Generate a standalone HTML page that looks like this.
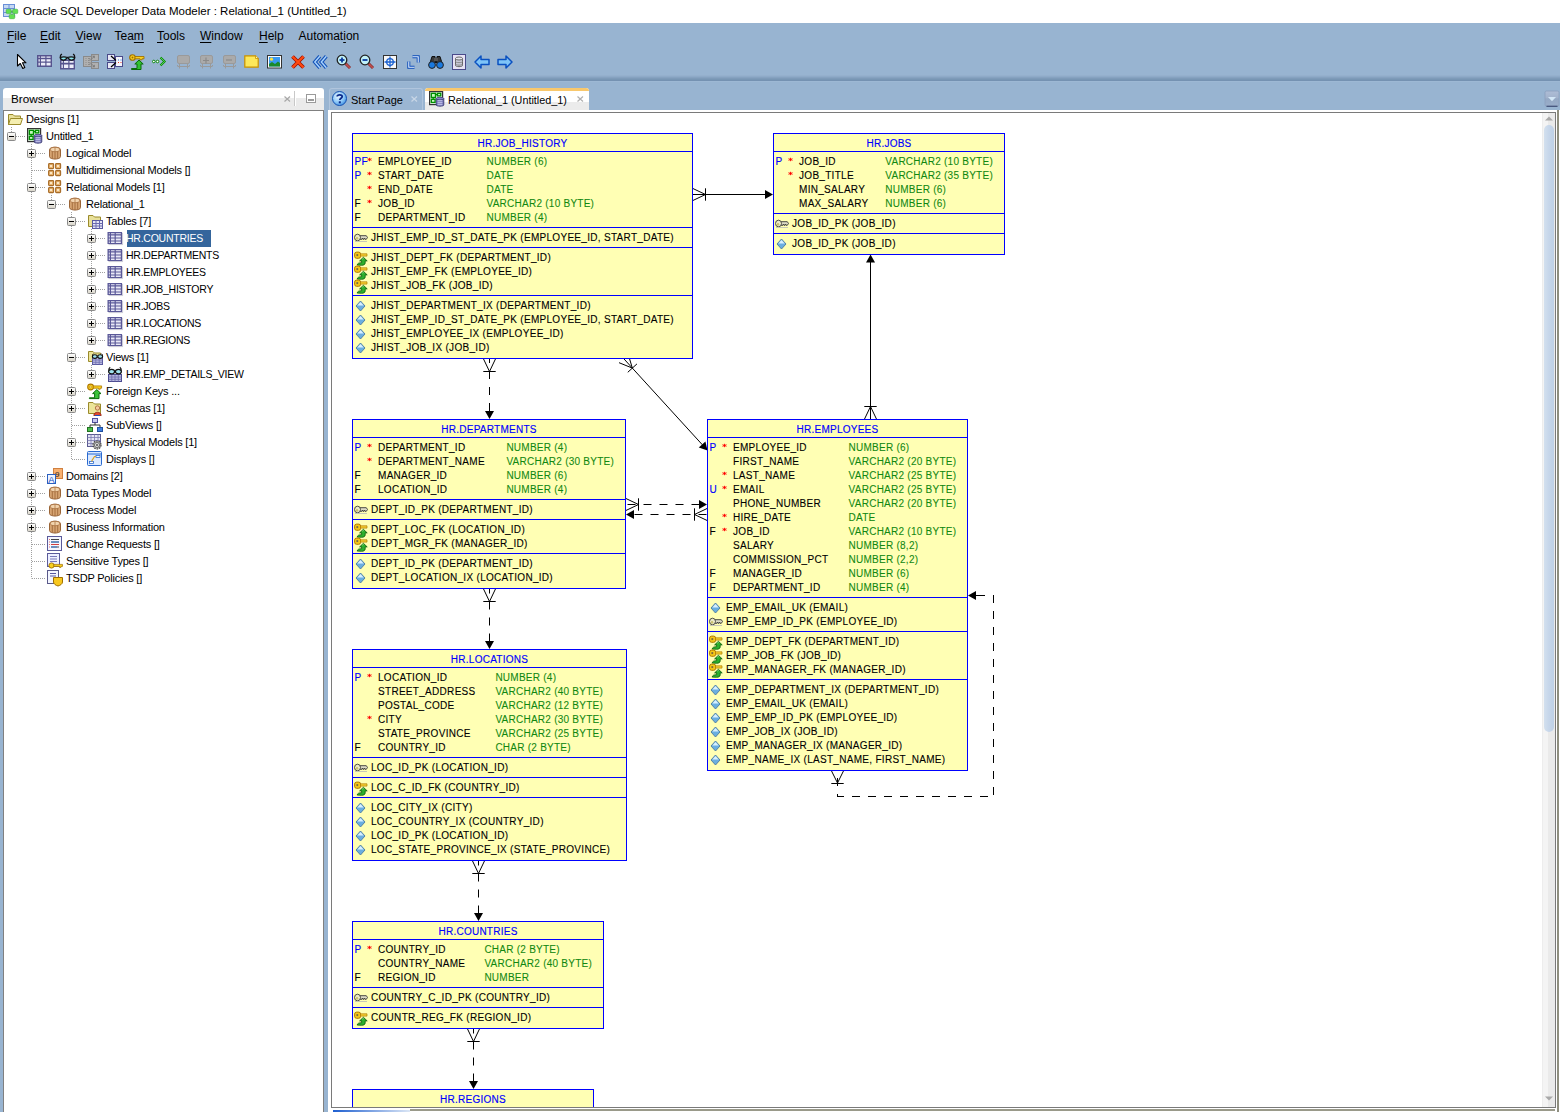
<!DOCTYPE html><html><head><meta charset="utf-8"><style>
html,body{margin:0;padding:0;}
body{width:1560px;height:1112px;overflow:hidden;position:relative;background:#98b4d1;font-family:"Liberation Sans",sans-serif;}
.t{position:absolute;white-space:pre;font-family:"Liberation Sans",sans-serif;}
svg{position:absolute;overflow:visible;}
u{text-decoration:underline;text-underline-offset:2px;text-decoration-thickness:1px;}
</style></head><body>
<div style="position:absolute;left:0px;top:0px;width:1560px;height:23px;background:#fff"></div>
<svg style="left:0;top:0" width="22" height="22" viewBox="0 0 22 22">
<rect x="3.5" y="4.5" width="11" height="12" fill="#c6d8f2" stroke="#6a90d8"/>
<path d="M3.5 8.5H14.5M3.5 12.5H14.5M9 4.5V8.5" stroke="#6a90d8"/>
<rect x="6.2" y="9.2" width="5" height="4.4" rx="1.2" fill="#62e052" stroke="#44b040" stroke-width="0.6"/>
<rect x="12.6" y="9.2" width="5.2" height="4.4" rx="1.2" fill="#62e052" stroke="#44b040" stroke-width="0.6"/>
<rect x="9.2" y="14.4" width="5.6" height="4.3" rx="1.2" fill="#62e052" stroke="#44b040" stroke-width="0.6"/>
<path d="M11.2 11.4H12.6M12 13.6V14.4" stroke="#44a040"/>
</svg>
<div class="t" style="left:23px;top:6.27px;font-size:11.5px;line-height:11.5px;color:#000;letter-spacing:0px;">Oracle SQL Developer Data Modeler : Relational_1 (Untitled_1)</div>
<div class="t" style="left:7px;top:29.84px;font-size:12px;line-height:12px;color:#000;letter-spacing:0px;"><u>F</u>ile</div>
<div class="t" style="left:40px;top:29.84px;font-size:12px;line-height:12px;color:#000;letter-spacing:0px;"><u>E</u>dit</div>
<div class="t" style="left:75.5px;top:29.84px;font-size:12px;line-height:12px;color:#000;letter-spacing:0px;"><u>V</u>iew</div>
<div class="t" style="left:114.5px;top:29.84px;font-size:12px;line-height:12px;color:#000;letter-spacing:0px;">Tea<u>m</u></div>
<div class="t" style="left:157px;top:29.84px;font-size:12px;line-height:12px;color:#000;letter-spacing:0px;"><u>T</u>ools</div>
<div class="t" style="left:200px;top:29.84px;font-size:12px;line-height:12px;color:#000;letter-spacing:0px;"><u>W</u>indow</div>
<div class="t" style="left:259px;top:29.84px;font-size:12px;line-height:12px;color:#000;letter-spacing:0px;"><u>H</u>elp</div>
<div class="t" style="left:298.5px;top:29.84px;font-size:12px;line-height:12px;color:#000;letter-spacing:0px;">Automat<u>i</u>on</div>
<div style="position:absolute;left:0px;top:75px;width:1560px;height:1px;background:#95b0cd"></div>
<div style="position:absolute;left:0px;top:76px;width:1560px;height:1px;background:#8eaac8"></div>
<div style="position:absolute;left:0px;top:77px;width:1560px;height:1px;background:#86a2c0"></div>
<div style="position:absolute;left:0px;top:78px;width:1560px;height:1px;background:#7e9bb9"></div>
<div style="position:absolute;left:0px;top:79px;width:1560px;height:1px;background:#7896b4"></div>
<div style="position:absolute;left:0px;top:80px;width:1560px;height:1px;background:#7592b2"></div>
<div style="position:absolute;left:0px;top:81px;width:1560px;height:1px;background:#9db8d4"></div>
<svg style="left:16px;top:53px" width="11" height="17" viewBox="0 0 11 17"><path d="M1.5 1.5V13L4.3 10.5L6.8 15.5L8.8 14.5L6.5 9.8H10Z" fill="#fff" stroke="#000" stroke-width="1.1" stroke-linejoin="round"/></svg><svg style="left:36px;top:54px" width="17" height="14" viewBox="0 0 17 14"><rect x="1" y="1" width="15" height="12" fill="#56548e"/><path d="M2.5 2.5H3.8V3.8H2.5ZM5 2.5H9.3V3.8H5ZM10.5 2.5H14.6V3.8H10.5ZM2.5 5.2H3.8V7.4H2.5ZM5 5.2H9.3V7.4H5ZM10.5 5.2H14.6V7.4H10.5ZM2.5 8.8H3.8V11.5H2.5ZM5 8.8H9.3V11.5H5ZM10.5 8.8H14.6V11.5H10.5Z" fill="#eeeefa"/></svg><svg style="left:59px;top:53px" width="17" height="17" viewBox="0 0 17 17"><rect x="1" y="6.5" width="15" height="10" fill="#56548e"/><path d="M2.5 8H3.8V9.8H2.5ZM5 8H9.3V9.8H5ZM10.5 8H14.6V9.8H10.5ZM2.5 11.5H3.8V15H2.5ZM5 11.5H9.3V15H5ZM10.5 11.5H14.6V15H10.5Z" fill="#eeeefa"/><path d="M1.3 4.5C1.3 7.5 6.5 8 7.6 5.2L8.5 4.5L9.4 5.2C10.5 8 15.7 7.5 15.7 4.5C13 3.5 10.5 3.8 8.5 4.5C6.5 3.8 4 3.5 1.3 4.5Z" fill="#8ee8f0" stroke="#111" stroke-width="1.3"/><path d="M1.5 4.5C1.2 3 1.8 1.5 3 1M15.5 4.5C15.8 3 15.2 1.5 14 1" fill="none" stroke="#111" stroke-width="1.3"/></svg><svg style="left:83px;top:54px" width="16" height="15" viewBox="0 0 16 15"><rect x="0.5" y="2.5" width="8" height="10" fill="#b0b0b0" stroke="#8a8a8a"/><rect x="8.5" y="0.5" width="7" height="6" fill="#b0b0b0" stroke="#8a8a8a"/><rect x="8.5" y="8.5" width="7" height="6" fill="#b0b0b0" stroke="#8a8a8a"/><path d="M2.5 4.5H3.5M5 4.5H7M2.5 6.5H3.5M5 6.5H6M2.5 8.5H3.5M5 8.5H6M2.5 10.5H3.5M5 10.5H7" stroke="#8c8c8c"/><path d="M6.5 6.5L11 2.5M6.5 8.5L11 12.5" stroke="#7a7a7a" stroke-width="1.1" stroke-dasharray="1 0.5"/><path d="M9 1.8H11.8V4.6ZM9 13.2H11.8V10.4Z" fill="#7a7a7a"/></svg><svg style="left:107px;top:54px" width="16" height="15" viewBox="0 0 16 15"><rect x="0.5" y="0.5" width="7" height="6" fill="#e8e8f4" stroke="#4a4a8a"/><rect x="0.5" y="8.5" width="7" height="6" fill="#e8e8f4" stroke="#4a4a8a"/><rect x="8.5" y="2.5" width="7" height="10" fill="#f4f4fa" stroke="#4a4a8a"/><path d="M4 2L9 6.5M4 13L9 8.5" stroke="#000" stroke-width="1.2"/><path d="M11 6H12M13.5 6H14.5" stroke="#2a7ae0"/><path d="M11 8.5H12M13.5 8.5H14.5" stroke="#e03a2a"/></svg><svg style="left:129px;top:54px" width="16" height="16" viewBox="0 0 16 16"><circle cx="3.5" cy="3.5" r="2.8" fill="#f8d020" stroke="#a07000" stroke-width="1.1"/><circle cx="3.5" cy="3.5" r="1" fill="#a07000"/><path d="M6 2.5H15V4.8H13V5.8H11V4.8H6Z" fill="#f8d020" stroke="#a07000" stroke-width="0.9"/><path d="M2.5 14.5H8V10H5.8L10 6L14.2 10H12V15.5H2.5Z" fill="#30c030" stroke="#0a6a0a" stroke-width="1"/></svg><svg style="left:152px;top:56px" width="15" height="11" viewBox="0 0 15 11"><circle cx="1.8" cy="5.5" r="1.3" fill="#fff" stroke="#0a8a0a"/><circle cx="5.5" cy="5.5" r="1.3" fill="#fff" stroke="#0a8a0a"/><path d="M8.5 1.5L12.5 5.5L8.5 9.5" fill="none" stroke="#0a8a0a" stroke-width="2.2"/><path d="M8.5 1.5L12.5 5.5L8.5 9.5" fill="none" stroke="#6ae06a" stroke-width="0.8"/></svg><svg style="left:177px;top:55px" width="13" height="14" viewBox="0 0 13 14"><rect x="0.5" y="0.5" width="12" height="8" rx="1.5" fill="#aaaaaa" stroke="#9a9a9a"/><path d="M2.5 8.5V13.5M10.5 8.5V13.5M0.5 11.5H12.5M0 10L1.5 11.5M13 10L11.5 11.5" stroke="#9a9a9a"/></svg><svg style="left:200px;top:55px" width="13" height="14" viewBox="0 0 13 14"><rect x="0.5" y="0.5" width="12" height="8" rx="1.5" fill="#aaaaaa" stroke="#9a9a9a"/><path d="M6 2.5V8.5M3 5.5H9" stroke="#8a8a8a" stroke-width="1.2"/><path d="M2.5 8.5V13.5M10.5 8.5V13.5M0.5 11.5H12.5M0 10L1.5 11.5M13 10L11.5 11.5" stroke="#9a9a9a"/></svg><svg style="left:223px;top:55px" width="13" height="14" viewBox="0 0 13 14"><rect x="0.5" y="0.5" width="12" height="8" rx="1.5" fill="#aaaaaa" stroke="#9a9a9a"/><path d="M3 5H9" stroke="#8a8a8a" stroke-width="1.2"/><path d="M2.5 8.5V13.5M10.5 8.5V13.5M0.5 11.5H12.5M0 10L1.5 11.5M13 10L11.5 11.5" stroke="#9a9a9a"/></svg><svg style="left:244px;top:55px" width="15" height="13" viewBox="0 0 15 13"><path d="M0.8 0.8H11.5L14.2 3.5V12.2H0.8Z" fill="#fde85a" stroke="#c89000" stroke-width="1.2"/><path d="M11.5 0.8V3.5H14.2" fill="#fff6b0" stroke="#c89000" stroke-width="0.8"/></svg><svg style="left:267px;top:55px" width="15" height="14" viewBox="0 0 15 14"><rect x="0.5" y="0.5" width="14" height="12.5" fill="#fff" stroke="#333"/><rect x="2" y="2" width="11" height="9.5" fill="#3a9af0"/><circle cx="4.5" cy="4.2" r="1.6" fill="#f8e040"/><path d="M2 11.5V9L5 7L8 9L11 6.5L13 8V11.5Z" fill="#1a8a2a"/></svg><svg style="left:291px;top:55px" width="14" height="14" viewBox="0 0 14 14"><path d="M1.5 1.5L12.5 12.5M12.5 1.5L1.5 12.5" stroke="#a01000" stroke-width="3.8"/><path d="M1.5 1.5L12.5 12.5M12.5 1.5L1.5 12.5" stroke="#ff4a10" stroke-width="2.2"/></svg><svg style="left:313px;top:55px" width="16" height="14" viewBox="0 0 16 14"><path d="M6.8 1.2L1.8 7L6.8 12.8M13.3 1.2L8.3 7L13.3 12.8" fill="none" stroke="#1452b8" stroke-width="3.6" stroke-linejoin="miter"/><path d="M6.8 1.2L1.8 7L6.8 12.8M13.3 1.2L8.3 7L13.3 12.8" fill="none" stroke="#a8d4ff" stroke-width="1.4"/></svg><svg style="left:336px;top:54px" width="16" height="16" viewBox="0 0 16 16"><path d="M9.5 9.5L14 14" stroke="#8a3030" stroke-width="3"/><path d="M9.5 9.5L14 14" stroke="#c05050" stroke-width="1.5"/><circle cx="6" cy="6" r="4.8" fill="#c0f0f8" stroke="#222" stroke-width="1.3"/><path d="M3.5 6H8.5" stroke="#0a3aa0" stroke-width="1.8"/><path d="M6 3.5V8.5" stroke="#0a3aa0" stroke-width="1.8"/></svg><svg style="left:359px;top:54px" width="16" height="16" viewBox="0 0 16 16"><path d="M9.5 9.5L14 14" stroke="#8a3030" stroke-width="3"/><path d="M9.5 9.5L14 14" stroke="#c05050" stroke-width="1.5"/><circle cx="6" cy="6" r="4.8" fill="#c0f0f8" stroke="#222" stroke-width="1.3"/><path d="M3.5 6H8.5" stroke="#0a3aa0" stroke-width="1.8"/></svg><svg style="left:383px;top:55px" width="14" height="14" viewBox="0 0 14 14"><rect x="0.5" y="0.5" width="13" height="13" fill="#f8f8f8" stroke="#333"/><circle cx="7" cy="7" r="3.3" fill="none" stroke="#1a60d0" stroke-width="1.3"/><path d="M7 1.5V12.5M1.5 7H12.5" stroke="#1a60d0" stroke-width="1.3"/></svg><svg style="left:407px;top:55px" width="13" height="14" viewBox="0 0 13 14"><path d="M5.5 1.8H11.2V7.5M1.8 6.5V12.2H7.5" fill="none" stroke="#0a4ab8" stroke-width="3"/><path d="M5.5 1.8H11.2V7.5M1.8 6.5V12.2H7.5" fill="none" stroke="#e8f4ff" stroke-width="1.1"/></svg><svg style="left:428px;top:55px" width="16" height="14" viewBox="0 0 16 14"><path d="M2 8L4 1.5H7L7.5 8ZM14 8L12 1.5H9L8.5 8Z" fill="#3a3a3a" stroke="#111"/><rect x="6" y="3" width="4" height="3" fill="#555"/><circle cx="4" cy="10" r="3.4" fill="#1a7ae0" stroke="#222"/><circle cx="12" cy="10" r="3.4" fill="#1a7ae0" stroke="#222"/></svg><svg style="left:452px;top:54px" width="14" height="16" viewBox="0 0 14 16"><rect x="0.5" y="0.5" width="13" height="15" fill="#e6e2f4" stroke="#4a4a8a"/><path d="M3.5 4.5V11.5C3.5 13 10.5 13 10.5 11.5V4.5" fill="#c8c8d8" stroke="#666"/><ellipse cx="7" cy="4.5" rx="3.5" ry="1.5" fill="#e8e8f0" stroke="#666"/><path d="M3.5 7.5C3.5 9 10.5 9 10.5 7.5M3.5 10C3.5 11.5 10.5 11.5 10.5 10" fill="none" stroke="#888"/></svg><svg style="left:474px;top:55px" width="16" height="14" viewBox="0 0 16 14"><path d="M1 7L7 1V4.5H15V9.5H7V13Z" fill="#7ec4f8" stroke="#0a50c0" stroke-width="1.5" stroke-linejoin="round"/></svg><svg style="left:497px;top:55px" width="16" height="14" viewBox="0 0 16 14"><path d="M15 7L9 1V4.5H1V9.5H9V13Z" fill="#7ec4f8" stroke="#0a50c0" stroke-width="1.5" stroke-linejoin="round"/></svg>
<div style="position:absolute;left:3px;top:88px;width:321px;height:1030px;background:#fff;border-radius:3px 3px 0 0"></div>
<div style="position:absolute;left:3px;top:98px;width:321px;height:12px;background:#ebebeb"></div>
<div class="t" style="left:11px;top:93.10px;font-size:11.7px;line-height:11.7px;color:#000;letter-spacing:0px;">Browser</div>
<svg style="left:284px;top:96px" width="7" height="6"><path d="M0.5 0.5L6 5.5M6 0.5L0.5 5.5" stroke="#a8a8a8" stroke-width="1.2"/></svg>
<div style="position:absolute;left:294px;top:91px;width:1px;height:15px;background:#c8c8c8"></div>
<div style="position:absolute;left:295px;top:91px;width:1px;height:15px;background:#fff"></div>
<div style="position:absolute;left:306px;top:94px;width:10px;height:9px;background:#fff;border:1px solid #9a9a9a;box-sizing:border-box"></div>
<div style="position:absolute;left:308px;top:99px;width:6px;height:2px;background:#9a9a9a"></div>
<div style="position:absolute;left:3px;top:110px;width:321px;height:1010px;background:#fff;border-top:1px solid #808080;border-left:1px solid #808080;border-right:1px solid #808080;box-sizing:border-box"></div>
<svg style="left:0;top:0" width="330" height="600"><path d="M11.5 127V136.5" stroke="#a0a0a0" stroke-dasharray="1 1"/><path d="M31.5 144V578.5" stroke="#a0a0a0" stroke-dasharray="1 1"/><path d="M51.5 195V204.5" stroke="#a0a0a0" stroke-dasharray="1 1"/><path d="M71.5 212V459.5" stroke="#a0a0a0" stroke-dasharray="1 1"/><path d="M91.5 229V340.5" stroke="#a0a0a0" stroke-dasharray="1 1"/><path d="M91.5 365V374.5" stroke="#a0a0a0" stroke-dasharray="1 1"/><path d="M12 136.5H25" stroke="#a0a0a0" stroke-dasharray="1 1"/><path d="M32 153.5H45" stroke="#a0a0a0" stroke-dasharray="1 1"/><path d="M32 170.5H45" stroke="#a0a0a0" stroke-dasharray="1 1"/><path d="M32 187.5H45" stroke="#a0a0a0" stroke-dasharray="1 1"/><path d="M52 204.5H65" stroke="#a0a0a0" stroke-dasharray="1 1"/><path d="M72 221.5H85" stroke="#a0a0a0" stroke-dasharray="1 1"/><path d="M92 238.5H105" stroke="#a0a0a0" stroke-dasharray="1 1"/><path d="M92 255.5H105" stroke="#a0a0a0" stroke-dasharray="1 1"/><path d="M92 272.5H105" stroke="#a0a0a0" stroke-dasharray="1 1"/><path d="M92 289.5H105" stroke="#a0a0a0" stroke-dasharray="1 1"/><path d="M92 306.5H105" stroke="#a0a0a0" stroke-dasharray="1 1"/><path d="M92 323.5H105" stroke="#a0a0a0" stroke-dasharray="1 1"/><path d="M92 340.5H105" stroke="#a0a0a0" stroke-dasharray="1 1"/><path d="M72 357.5H85" stroke="#a0a0a0" stroke-dasharray="1 1"/><path d="M92 374.5H105" stroke="#a0a0a0" stroke-dasharray="1 1"/><path d="M72 391.5H85" stroke="#a0a0a0" stroke-dasharray="1 1"/><path d="M72 408.5H85" stroke="#a0a0a0" stroke-dasharray="1 1"/><path d="M72 425.5H85" stroke="#a0a0a0" stroke-dasharray="1 1"/><path d="M72 442.5H85" stroke="#a0a0a0" stroke-dasharray="1 1"/><path d="M72 459.5H85" stroke="#a0a0a0" stroke-dasharray="1 1"/><path d="M32 476.5H45" stroke="#a0a0a0" stroke-dasharray="1 1"/><path d="M32 493.5H45" stroke="#a0a0a0" stroke-dasharray="1 1"/><path d="M32 510.5H45" stroke="#a0a0a0" stroke-dasharray="1 1"/><path d="M32 527.5H45" stroke="#a0a0a0" stroke-dasharray="1 1"/><path d="M32 544.5H45" stroke="#a0a0a0" stroke-dasharray="1 1"/><path d="M32 561.5H45" stroke="#a0a0a0" stroke-dasharray="1 1"/><path d="M32 578.5H45" stroke="#a0a0a0" stroke-dasharray="1 1"/></svg>
<svg style="left:7px;top:111px" width="17" height="17" viewBox="0 0 17 17"><path d="M1.5 3.5H6L7.5 5H13.5V13.5H1.5Z" fill="#e8e09a" stroke="#9a8a2a"/><path d="M1.5 13.5L3.5 7.5H15.5L13.5 13.5Z" fill="#f4eeb0" stroke="#9a8a2a"/></svg>
<div class="t" style="left:26px;top:113.69px;font-size:11px;line-height:11px;color:#000;letter-spacing:-0.2px;">Designs [1]</div>
<svg style="left:27px;top:128px" width="17" height="17" viewBox="0 0 17 17"><rect x="0.6" y="0.6" width="13" height="13" fill="#fff" stroke="#333" stroke-width="1.2"/><rect x="2.3" y="2.3" width="4.2" height="4.2" fill="#c8f8c0" stroke="#009000" stroke-width="1.4"/><rect x="8.4" y="2.3" width="3.4" height="2.6" fill="#c8f8c0" stroke="#009000" stroke-width="1.4"/><rect x="2.3" y="8.3" width="3.8" height="3.2" fill="#c8f8c0" stroke="#009000" stroke-width="1.4"/><path d="M6.5 3.6H8.4M4.2 6.5V8.3" stroke="#009000" stroke-width="1.2"/><path d="M7.2 7.6V14C7.2 15.6 14.8 15.6 14.8 14V7.6Z" fill="#6a6ab0"/><ellipse cx="11" cy="7.6" rx="3.8" ry="1.3" fill="#8a8ac8" stroke="#3a3a70" stroke-width="0.8"/><path d="M8.5 9.8H13.5M8.5 11.8H13.5M8.5 13.8H13.5" stroke="#e8e8ff" stroke-width="0.9"/><path d="M7.2 7.6V14C7.2 15.6 14.8 15.6 14.8 14V7.6" fill="none" stroke="#3a3a70" stroke-width="0.8"/></svg>
<svg style="left:7px;top:132px" width="9" height="9" viewBox="0 0 9 9"><defs><linearGradient id="eg1" x1="0" y1="0" x2="0" y2="1"><stop offset="0" stop-color="#fff"/><stop offset="1" stop-color="#d8d4c8"/></linearGradient></defs><rect x="0.5" y="0.5" width="8" height="8" rx="1" fill="url(#eg1)" stroke="#8a8a8a"/><path d="M2 4.5H7" stroke="#000"/></svg>
<div class="t" style="left:46px;top:130.69px;font-size:11px;line-height:11px;color:#000;letter-spacing:-0.2px;">Untitled_1</div>
<svg style="left:47px;top:145px" width="17" height="17" viewBox="0 0 17 17"><path d="M2.5 4.6C2.5 1.4 13.5 1.4 13.5 4.6V11.6C13.5 14.8 2.5 14.8 2.5 11.6Z" fill="#d6a472" stroke="#9a6436" stroke-width="1"/><ellipse cx="8" cy="4.5" rx="4.6" ry="2.2" fill="#f2d4ae" stroke="#a87040" stroke-width="0.8"/><path d="M5.3 6.5V13.4M8 6.8V14.2M10.7 6.5V13.4" stroke="#a06a3a" stroke-width="0.9"/><path d="M8 2.4V6.8" stroke="#b07a48" stroke-width="0.8"/></svg>
<svg style="left:27px;top:149px" width="9" height="9" viewBox="0 0 9 9"><defs><linearGradient id="eg2" x1="0" y1="0" x2="0" y2="1"><stop offset="0" stop-color="#fff"/><stop offset="1" stop-color="#d8d4c8"/></linearGradient></defs><rect x="0.5" y="0.5" width="8" height="8" rx="1" fill="url(#eg2)" stroke="#8a8a8a"/><path d="M2 4.5H7" stroke="#000"/><path d="M4.5 2V7" stroke="#000"/></svg>
<div class="t" style="left:66px;top:147.69px;font-size:11px;line-height:11px;color:#000;letter-spacing:-0.2px;">Logical Model</div>
<svg style="left:47px;top:162px" width="17" height="17" viewBox="0 0 17 17"><rect x="1.6" y="1.6" width="5" height="5" rx="0.8" fill="#e8b470" stroke="#a86c28" stroke-width="1.1"/><rect x="8.6" y="1.6" width="5" height="5" rx="0.8" fill="#e8b470" stroke="#a86c28" stroke-width="1.1"/><rect x="1.6" y="8.6" width="5" height="5" rx="0.8" fill="#e8b470" stroke="#a86c28" stroke-width="1.1"/><rect x="8.6" y="8.6" width="5" height="5" rx="0.8" fill="#e8b470" stroke="#a86c28" stroke-width="1.1"/><rect x="3" y="3" width="2" height="2" fill="#fbe6c4"/><rect x="10" y="3" width="2" height="2" fill="#fbe6c4"/><rect x="3" y="10" width="2" height="2" fill="#fbe6c4"/><rect x="10" y="10" width="2" height="2" fill="#fbe6c4"/></svg>
<div class="t" style="left:66px;top:164.69px;font-size:11px;line-height:11px;color:#000;letter-spacing:-0.2px;">Multidimensional Models []</div>
<svg style="left:47px;top:179px" width="17" height="17" viewBox="0 0 17 17"><rect x="1.6" y="1.6" width="5" height="5" rx="0.8" fill="#e8b470" stroke="#a86c28" stroke-width="1.1"/><rect x="8.6" y="1.6" width="5" height="5" rx="0.8" fill="#e8b470" stroke="#a86c28" stroke-width="1.1"/><rect x="1.6" y="8.6" width="5" height="5" rx="0.8" fill="#e8b470" stroke="#a86c28" stroke-width="1.1"/><rect x="8.6" y="8.6" width="5" height="5" rx="0.8" fill="#e8b470" stroke="#a86c28" stroke-width="1.1"/><rect x="3" y="3" width="2" height="2" fill="#fbe6c4"/><rect x="10" y="3" width="2" height="2" fill="#fbe6c4"/><rect x="3" y="10" width="2" height="2" fill="#fbe6c4"/><rect x="10" y="10" width="2" height="2" fill="#fbe6c4"/></svg>
<svg style="left:27px;top:183px" width="9" height="9" viewBox="0 0 9 9"><defs><linearGradient id="eg4" x1="0" y1="0" x2="0" y2="1"><stop offset="0" stop-color="#fff"/><stop offset="1" stop-color="#d8d4c8"/></linearGradient></defs><rect x="0.5" y="0.5" width="8" height="8" rx="1" fill="url(#eg4)" stroke="#8a8a8a"/><path d="M2 4.5H7" stroke="#000"/></svg>
<div class="t" style="left:66px;top:181.69px;font-size:11px;line-height:11px;color:#000;letter-spacing:-0.2px;">Relational Models [1]</div>
<svg style="left:67px;top:196px" width="17" height="17" viewBox="0 0 17 17"><path d="M2.5 4.6C2.5 1.4 13.5 1.4 13.5 4.6V11.6C13.5 14.8 2.5 14.8 2.5 11.6Z" fill="#d6a472" stroke="#9a6436" stroke-width="1"/><ellipse cx="8" cy="4.5" rx="4.6" ry="2.2" fill="#f2d4ae" stroke="#a87040" stroke-width="0.8"/><path d="M5.3 6.5V13.4M8 6.8V14.2M10.7 6.5V13.4" stroke="#a06a3a" stroke-width="0.9"/><path d="M8 2.4V6.8" stroke="#b07a48" stroke-width="0.8"/></svg>
<svg style="left:47px;top:200px" width="9" height="9" viewBox="0 0 9 9"><defs><linearGradient id="eg5" x1="0" y1="0" x2="0" y2="1"><stop offset="0" stop-color="#fff"/><stop offset="1" stop-color="#d8d4c8"/></linearGradient></defs><rect x="0.5" y="0.5" width="8" height="8" rx="1" fill="url(#eg5)" stroke="#8a8a8a"/><path d="M2 4.5H7" stroke="#000"/></svg>
<div class="t" style="left:86px;top:198.69px;font-size:11px;line-height:11px;color:#000;letter-spacing:-0.2px;">Relational_1</div>
<svg style="left:87px;top:213px" width="17" height="17" viewBox="0 0 17 17"><path d="M1.5 2.5H6L7.5 4H13.5V13.5H1.5Z" fill="#e8e09a" stroke="#9a8a2a"/><rect x="5.5" y="7.5" width="10" height="8" fill="#e6e6f6" stroke="#5a5aa0"/><path d="M5.5 10.5H15.5M5.5 13H15.5M9 7.5V15.5M12.5 7.5V15.5" stroke="#6a6ab0"/></svg>
<svg style="left:67px;top:217px" width="9" height="9" viewBox="0 0 9 9"><defs><linearGradient id="eg6" x1="0" y1="0" x2="0" y2="1"><stop offset="0" stop-color="#fff"/><stop offset="1" stop-color="#d8d4c8"/></linearGradient></defs><rect x="0.5" y="0.5" width="8" height="8" rx="1" fill="url(#eg6)" stroke="#8a8a8a"/><path d="M2 4.5H7" stroke="#000"/></svg>
<div class="t" style="left:106px;top:215.69px;font-size:11px;line-height:11px;color:#000;letter-spacing:-0.2px;">Tables [7]</div>
<svg style="left:107px;top:230px" width="17" height="17" viewBox="0 0 17 17"><rect x="0.5" y="2" width="14.5" height="12" fill="#5a5898"/><path d="M1.8 3.2H2.8V4.2H1.8ZM4 3.2H7.6V4.2H4ZM8.8 3.2H13.8V4.2H8.8ZM1.8 5.4H2.8V7.4H1.8ZM4 5.4H7.6V7.4H4ZM8.8 5.4H13.8V7.4H8.8ZM1.8 8.4H2.8V10.4H1.8ZM4 8.4H7.6V10.4H4ZM8.8 8.4H13.8V10.4H8.8ZM1.8 11.4H2.8V13H1.8ZM4 11.4H7.6V13H4ZM8.8 11.4H13.8V13H8.8Z" fill="#e8e8f6"/><path d="M1.5 14.6H15.6V2.8" fill="none" stroke="#b8b8c8" stroke-width="0.8"/></svg>
<svg style="left:87px;top:234px" width="9" height="9" viewBox="0 0 9 9"><defs><linearGradient id="eg7" x1="0" y1="0" x2="0" y2="1"><stop offset="0" stop-color="#fff"/><stop offset="1" stop-color="#d8d4c8"/></linearGradient></defs><rect x="0.5" y="0.5" width="8" height="8" rx="1" fill="url(#eg7)" stroke="#8a8a8a"/><path d="M2 4.5H7" stroke="#000"/><path d="M4.5 2V7" stroke="#000"/></svg>
<div style="position:absolute;left:127px;top:230px;width:84px;height:17px;background:#34659c"></div>
<div class="t" style="left:126px;top:233.11px;font-size:10.5px;line-height:10.5px;color:#fff;letter-spacing:-0.25px;">HR.COUNTRIES</div>
<svg style="left:107px;top:247px" width="17" height="17" viewBox="0 0 17 17"><rect x="0.5" y="2" width="14.5" height="12" fill="#5a5898"/><path d="M1.8 3.2H2.8V4.2H1.8ZM4 3.2H7.6V4.2H4ZM8.8 3.2H13.8V4.2H8.8ZM1.8 5.4H2.8V7.4H1.8ZM4 5.4H7.6V7.4H4ZM8.8 5.4H13.8V7.4H8.8ZM1.8 8.4H2.8V10.4H1.8ZM4 8.4H7.6V10.4H4ZM8.8 8.4H13.8V10.4H8.8ZM1.8 11.4H2.8V13H1.8ZM4 11.4H7.6V13H4ZM8.8 11.4H13.8V13H8.8Z" fill="#e8e8f6"/><path d="M1.5 14.6H15.6V2.8" fill="none" stroke="#b8b8c8" stroke-width="0.8"/></svg>
<svg style="left:87px;top:251px" width="9" height="9" viewBox="0 0 9 9"><defs><linearGradient id="eg8" x1="0" y1="0" x2="0" y2="1"><stop offset="0" stop-color="#fff"/><stop offset="1" stop-color="#d8d4c8"/></linearGradient></defs><rect x="0.5" y="0.5" width="8" height="8" rx="1" fill="url(#eg8)" stroke="#8a8a8a"/><path d="M2 4.5H7" stroke="#000"/><path d="M4.5 2V7" stroke="#000"/></svg>
<div class="t" style="left:126px;top:250.11px;font-size:10.5px;line-height:10.5px;color:#000;letter-spacing:-0.25px;">HR.DEPARTMENTS</div>
<svg style="left:107px;top:264px" width="17" height="17" viewBox="0 0 17 17"><rect x="0.5" y="2" width="14.5" height="12" fill="#5a5898"/><path d="M1.8 3.2H2.8V4.2H1.8ZM4 3.2H7.6V4.2H4ZM8.8 3.2H13.8V4.2H8.8ZM1.8 5.4H2.8V7.4H1.8ZM4 5.4H7.6V7.4H4ZM8.8 5.4H13.8V7.4H8.8ZM1.8 8.4H2.8V10.4H1.8ZM4 8.4H7.6V10.4H4ZM8.8 8.4H13.8V10.4H8.8ZM1.8 11.4H2.8V13H1.8ZM4 11.4H7.6V13H4ZM8.8 11.4H13.8V13H8.8Z" fill="#e8e8f6"/><path d="M1.5 14.6H15.6V2.8" fill="none" stroke="#b8b8c8" stroke-width="0.8"/></svg>
<svg style="left:87px;top:268px" width="9" height="9" viewBox="0 0 9 9"><defs><linearGradient id="eg9" x1="0" y1="0" x2="0" y2="1"><stop offset="0" stop-color="#fff"/><stop offset="1" stop-color="#d8d4c8"/></linearGradient></defs><rect x="0.5" y="0.5" width="8" height="8" rx="1" fill="url(#eg9)" stroke="#8a8a8a"/><path d="M2 4.5H7" stroke="#000"/><path d="M4.5 2V7" stroke="#000"/></svg>
<div class="t" style="left:126px;top:267.11px;font-size:10.5px;line-height:10.5px;color:#000;letter-spacing:-0.25px;">HR.EMPLOYEES</div>
<svg style="left:107px;top:281px" width="17" height="17" viewBox="0 0 17 17"><rect x="0.5" y="2" width="14.5" height="12" fill="#5a5898"/><path d="M1.8 3.2H2.8V4.2H1.8ZM4 3.2H7.6V4.2H4ZM8.8 3.2H13.8V4.2H8.8ZM1.8 5.4H2.8V7.4H1.8ZM4 5.4H7.6V7.4H4ZM8.8 5.4H13.8V7.4H8.8ZM1.8 8.4H2.8V10.4H1.8ZM4 8.4H7.6V10.4H4ZM8.8 8.4H13.8V10.4H8.8ZM1.8 11.4H2.8V13H1.8ZM4 11.4H7.6V13H4ZM8.8 11.4H13.8V13H8.8Z" fill="#e8e8f6"/><path d="M1.5 14.6H15.6V2.8" fill="none" stroke="#b8b8c8" stroke-width="0.8"/></svg>
<svg style="left:87px;top:285px" width="9" height="9" viewBox="0 0 9 9"><defs><linearGradient id="eg10" x1="0" y1="0" x2="0" y2="1"><stop offset="0" stop-color="#fff"/><stop offset="1" stop-color="#d8d4c8"/></linearGradient></defs><rect x="0.5" y="0.5" width="8" height="8" rx="1" fill="url(#eg10)" stroke="#8a8a8a"/><path d="M2 4.5H7" stroke="#000"/><path d="M4.5 2V7" stroke="#000"/></svg>
<div class="t" style="left:126px;top:284.11px;font-size:10.5px;line-height:10.5px;color:#000;letter-spacing:-0.25px;">HR.JOB_HISTORY</div>
<svg style="left:107px;top:298px" width="17" height="17" viewBox="0 0 17 17"><rect x="0.5" y="2" width="14.5" height="12" fill="#5a5898"/><path d="M1.8 3.2H2.8V4.2H1.8ZM4 3.2H7.6V4.2H4ZM8.8 3.2H13.8V4.2H8.8ZM1.8 5.4H2.8V7.4H1.8ZM4 5.4H7.6V7.4H4ZM8.8 5.4H13.8V7.4H8.8ZM1.8 8.4H2.8V10.4H1.8ZM4 8.4H7.6V10.4H4ZM8.8 8.4H13.8V10.4H8.8ZM1.8 11.4H2.8V13H1.8ZM4 11.4H7.6V13H4ZM8.8 11.4H13.8V13H8.8Z" fill="#e8e8f6"/><path d="M1.5 14.6H15.6V2.8" fill="none" stroke="#b8b8c8" stroke-width="0.8"/></svg>
<svg style="left:87px;top:302px" width="9" height="9" viewBox="0 0 9 9"><defs><linearGradient id="eg11" x1="0" y1="0" x2="0" y2="1"><stop offset="0" stop-color="#fff"/><stop offset="1" stop-color="#d8d4c8"/></linearGradient></defs><rect x="0.5" y="0.5" width="8" height="8" rx="1" fill="url(#eg11)" stroke="#8a8a8a"/><path d="M2 4.5H7" stroke="#000"/><path d="M4.5 2V7" stroke="#000"/></svg>
<div class="t" style="left:126px;top:301.11px;font-size:10.5px;line-height:10.5px;color:#000;letter-spacing:-0.25px;">HR.JOBS</div>
<svg style="left:107px;top:315px" width="17" height="17" viewBox="0 0 17 17"><rect x="0.5" y="2" width="14.5" height="12" fill="#5a5898"/><path d="M1.8 3.2H2.8V4.2H1.8ZM4 3.2H7.6V4.2H4ZM8.8 3.2H13.8V4.2H8.8ZM1.8 5.4H2.8V7.4H1.8ZM4 5.4H7.6V7.4H4ZM8.8 5.4H13.8V7.4H8.8ZM1.8 8.4H2.8V10.4H1.8ZM4 8.4H7.6V10.4H4ZM8.8 8.4H13.8V10.4H8.8ZM1.8 11.4H2.8V13H1.8ZM4 11.4H7.6V13H4ZM8.8 11.4H13.8V13H8.8Z" fill="#e8e8f6"/><path d="M1.5 14.6H15.6V2.8" fill="none" stroke="#b8b8c8" stroke-width="0.8"/></svg>
<svg style="left:87px;top:319px" width="9" height="9" viewBox="0 0 9 9"><defs><linearGradient id="eg12" x1="0" y1="0" x2="0" y2="1"><stop offset="0" stop-color="#fff"/><stop offset="1" stop-color="#d8d4c8"/></linearGradient></defs><rect x="0.5" y="0.5" width="8" height="8" rx="1" fill="url(#eg12)" stroke="#8a8a8a"/><path d="M2 4.5H7" stroke="#000"/><path d="M4.5 2V7" stroke="#000"/></svg>
<div class="t" style="left:126px;top:318.11px;font-size:10.5px;line-height:10.5px;color:#000;letter-spacing:-0.25px;">HR.LOCATIONS</div>
<svg style="left:107px;top:332px" width="17" height="17" viewBox="0 0 17 17"><rect x="0.5" y="2" width="14.5" height="12" fill="#5a5898"/><path d="M1.8 3.2H2.8V4.2H1.8ZM4 3.2H7.6V4.2H4ZM8.8 3.2H13.8V4.2H8.8ZM1.8 5.4H2.8V7.4H1.8ZM4 5.4H7.6V7.4H4ZM8.8 5.4H13.8V7.4H8.8ZM1.8 8.4H2.8V10.4H1.8ZM4 8.4H7.6V10.4H4ZM8.8 8.4H13.8V10.4H8.8ZM1.8 11.4H2.8V13H1.8ZM4 11.4H7.6V13H4ZM8.8 11.4H13.8V13H8.8Z" fill="#e8e8f6"/><path d="M1.5 14.6H15.6V2.8" fill="none" stroke="#b8b8c8" stroke-width="0.8"/></svg>
<svg style="left:87px;top:336px" width="9" height="9" viewBox="0 0 9 9"><defs><linearGradient id="eg13" x1="0" y1="0" x2="0" y2="1"><stop offset="0" stop-color="#fff"/><stop offset="1" stop-color="#d8d4c8"/></linearGradient></defs><rect x="0.5" y="0.5" width="8" height="8" rx="1" fill="url(#eg13)" stroke="#8a8a8a"/><path d="M2 4.5H7" stroke="#000"/><path d="M4.5 2V7" stroke="#000"/></svg>
<div class="t" style="left:126px;top:335.11px;font-size:10.5px;line-height:10.5px;color:#000;letter-spacing:-0.25px;">HR.REGIONS</div>
<svg style="left:87px;top:349px" width="17" height="17" viewBox="0 0 17 17"><path d="M1.5 2.5H6L7.5 4H13.5V12.5H1.5Z" fill="#ece49a" stroke="#9a8a2a"/><rect x="5.5" y="8.5" width="10" height="7" fill="#b8b8e0" stroke="#5a5aa0"/><path d="M5.5 11H15.5M5.5 13.3H15.5M8.8 8.5V15.5M12.2 8.5V15.5" stroke="#7070b0" stroke-width="0.8"/><ellipse cx="7.8" cy="7.6" rx="2.4" ry="1.8" fill="#a0e4f0" stroke="#111" stroke-width="1.1"/><ellipse cx="13.2" cy="7.6" rx="2.4" ry="1.8" fill="#a0e4f0" stroke="#111" stroke-width="1.1"/><path d="M5.6 6.8C5.5 5.6 6 4.9 6.6 4.6M15.4 6.8C15.5 5.6 15 4.9 14.4 4.6" fill="none" stroke="#111" stroke-width="1"/></svg>
<svg style="left:67px;top:353px" width="9" height="9" viewBox="0 0 9 9"><defs><linearGradient id="eg14" x1="0" y1="0" x2="0" y2="1"><stop offset="0" stop-color="#fff"/><stop offset="1" stop-color="#d8d4c8"/></linearGradient></defs><rect x="0.5" y="0.5" width="8" height="8" rx="1" fill="url(#eg14)" stroke="#8a8a8a"/><path d="M2 4.5H7" stroke="#000"/></svg>
<div class="t" style="left:106px;top:351.69px;font-size:11px;line-height:11px;color:#000;letter-spacing:-0.2px;">Views [1]</div>
<svg style="left:107px;top:366px" width="17" height="17" viewBox="0 0 17 17"><rect x="1.5" y="8.5" width="13" height="7" fill="#b8b8e0" stroke="#4a4a90"/><path d="M1.5 11H14.5M1.5 13.3H14.5M4.8 8.5V15.5M8 8.5V15.5M11.3 8.5V15.5" stroke="#6a6aa8" stroke-width="0.8"/><ellipse cx="4.6" cy="5.6" rx="3" ry="2.3" fill="#a0e4f0" stroke="#111" stroke-width="1.2"/><ellipse cx="11.4" cy="5.6" rx="3" ry="2.3" fill="#a0e4f0" stroke="#111" stroke-width="1.2"/><path d="M7.5 5.2H8.5" stroke="#111" stroke-width="1.1"/><path d="M1.8 4.8C1.6 3 2.2 1.8 3.2 1.2M14.2 4.8C14.4 3 13.8 1.8 12.8 1.2" fill="none" stroke="#111" stroke-width="1.2"/></svg>
<svg style="left:87px;top:370px" width="9" height="9" viewBox="0 0 9 9"><defs><linearGradient id="eg15" x1="0" y1="0" x2="0" y2="1"><stop offset="0" stop-color="#fff"/><stop offset="1" stop-color="#d8d4c8"/></linearGradient></defs><rect x="0.5" y="0.5" width="8" height="8" rx="1" fill="url(#eg15)" stroke="#8a8a8a"/><path d="M2 4.5H7" stroke="#000"/><path d="M4.5 2V7" stroke="#000"/></svg>
<div class="t" style="left:126px;top:369.11px;font-size:10.5px;line-height:10.5px;color:#000;letter-spacing:-0.25px;">HR.EMP_DETAILS_VIEW</div>
<svg style="left:87px;top:383px" width="17" height="17" viewBox="0 0 17 17"><circle cx="3.6" cy="4" r="2.9" fill="#f8d020" stroke="#b07800" stroke-width="1.1"/><circle cx="3.4" cy="4" r="1" fill="#fff6c0" stroke="#b07800" stroke-width="0.6"/><path d="M6.3 2.9H14.6V5.2H13.2V6.3H11.6V5.2H6.3Z" fill="#f8d020" stroke="#b07800" stroke-width="0.8"/><path d="M2.4 14.8H7.6V10.6H5.6L9.8 6.6L14 10.6H12V15.6H2.4Z" fill="#3ac23a" stroke="#0a6a0a" stroke-width="1"/></svg>
<svg style="left:67px;top:387px" width="9" height="9" viewBox="0 0 9 9"><defs><linearGradient id="eg16" x1="0" y1="0" x2="0" y2="1"><stop offset="0" stop-color="#fff"/><stop offset="1" stop-color="#d8d4c8"/></linearGradient></defs><rect x="0.5" y="0.5" width="8" height="8" rx="1" fill="url(#eg16)" stroke="#8a8a8a"/><path d="M2 4.5H7" stroke="#000"/><path d="M4.5 2V7" stroke="#000"/></svg>
<div class="t" style="left:106px;top:385.69px;font-size:11px;line-height:11px;color:#000;letter-spacing:-0.2px;">Foreign Keys ...</div>
<svg style="left:87px;top:400px" width="17" height="17" viewBox="0 0 17 17"><path d="M1.5 2.5H6L7.5 4H13.5V13.5H1.5Z" fill="#ece49a" stroke="#9a8a2a"/><circle cx="10.5" cy="8" r="2.2" fill="#f4c8a0" stroke="#a06030" stroke-width="0.8"/><path d="M6.8 15.5C6.8 11.2 14.2 11.2 14.2 15.5Z" fill="#e04a30" stroke="#902010" stroke-width="0.8"/><path d="M8 15.5H13" stroke="#2050c0" stroke-width="1"/></svg>
<svg style="left:67px;top:404px" width="9" height="9" viewBox="0 0 9 9"><defs><linearGradient id="eg17" x1="0" y1="0" x2="0" y2="1"><stop offset="0" stop-color="#fff"/><stop offset="1" stop-color="#d8d4c8"/></linearGradient></defs><rect x="0.5" y="0.5" width="8" height="8" rx="1" fill="url(#eg17)" stroke="#8a8a8a"/><path d="M2 4.5H7" stroke="#000"/><path d="M4.5 2V7" stroke="#000"/></svg>
<div class="t" style="left:106px;top:402.69px;font-size:11px;line-height:11px;color:#000;letter-spacing:-0.2px;">Schemas [1]</div>
<svg style="left:87px;top:417px" width="17" height="17" viewBox="0 0 17 17"><rect x="5.5" y="1.5" width="5" height="4" fill="#c8c8f0" stroke="#5050a0"/><path d="M8 5.5V8M3 8H13M3 8V10M13 8V10" stroke="#333"/><rect x="0.5" y="10.5" width="5" height="4" fill="#50c050" stroke="#207020"/><rect x="10.5" y="10.5" width="5" height="4" fill="#4080e0" stroke="#2050a0"/></svg>
<div class="t" style="left:106px;top:419.69px;font-size:11px;line-height:11px;color:#000;letter-spacing:-0.2px;">SubViews []</div>
<svg style="left:87px;top:434px" width="17" height="17" viewBox="0 0 17 17"><rect x="0.5" y="0.5" width="13" height="12" fill="#e4e4f4" stroke="#5a5a90"/><path d="M0.5 3.5H13.5M0.5 6.5H13.5M0.5 9.5H13.5M4 0.5V12.5M7.5 0.5V12.5M11 0.5V12.5" stroke="#7a7ab0" stroke-width="0.8"/><circle cx="10" cy="11" r="4" fill="#c8c8c8" stroke="#444" stroke-width="1.2" stroke-dasharray="1.6 0.9"/><circle cx="10" cy="11" r="2.6" fill="#d8d8d8" stroke="#555" stroke-width="0.8"/><circle cx="10" cy="11" r="1" fill="#555"/></svg>
<svg style="left:67px;top:438px" width="9" height="9" viewBox="0 0 9 9"><defs><linearGradient id="eg19" x1="0" y1="0" x2="0" y2="1"><stop offset="0" stop-color="#fff"/><stop offset="1" stop-color="#d8d4c8"/></linearGradient></defs><rect x="0.5" y="0.5" width="8" height="8" rx="1" fill="url(#eg19)" stroke="#8a8a8a"/><path d="M2 4.5H7" stroke="#000"/><path d="M4.5 2V7" stroke="#000"/></svg>
<div class="t" style="left:106px;top:436.69px;font-size:11px;line-height:11px;color:#000;letter-spacing:-0.2px;">Physical Models [1]</div>
<svg style="left:87px;top:451px" width="17" height="17" viewBox="0 0 17 17"><rect x="0.5" y="0.5" width="14" height="14" rx="1" fill="#dceaff" stroke="#2a6ad0"/><path d="M1 3H14" stroke="#2a6ad0" stroke-width="1"/><rect x="9" y="4.5" width="4" height="2" fill="#fff" stroke="#2a6ad0" stroke-width="0.8"/><rect x="2.5" y="10.5" width="4" height="2" fill="#fff" stroke="#2a6ad0" stroke-width="0.8"/><path d="M9 5.5H7.5L5 9.5V10.5" fill="none" stroke="#d8a020" stroke-width="1.2"/></svg>
<div class="t" style="left:106px;top:453.69px;font-size:11px;line-height:11px;color:#000;letter-spacing:-0.2px;">Displays []</div>
<svg style="left:47px;top:468px" width="17" height="17" viewBox="0 0 17 17"><rect x="6.5" y="0.5" width="9" height="10" fill="#f8b070" stroke="#d08040"/><text x="8" y="8.5" font-size="8" font-family="Liberation Sans" fill="#222">9</text><rect x="0.5" y="6.5" width="8" height="9" fill="#eef4ff" stroke="#2a60c0"/><text x="1.2" y="14.6" font-size="9.5" font-family="Liberation Sans" fill="#1a50c0">A</text></svg>
<svg style="left:27px;top:472px" width="9" height="9" viewBox="0 0 9 9"><defs><linearGradient id="eg21" x1="0" y1="0" x2="0" y2="1"><stop offset="0" stop-color="#fff"/><stop offset="1" stop-color="#d8d4c8"/></linearGradient></defs><rect x="0.5" y="0.5" width="8" height="8" rx="1" fill="url(#eg21)" stroke="#8a8a8a"/><path d="M2 4.5H7" stroke="#000"/><path d="M4.5 2V7" stroke="#000"/></svg>
<div class="t" style="left:66px;top:470.69px;font-size:11px;line-height:11px;color:#000;letter-spacing:-0.2px;">Domains [2]</div>
<svg style="left:47px;top:485px" width="17" height="17" viewBox="0 0 17 17"><path d="M2.5 4.6C2.5 1.4 13.5 1.4 13.5 4.6V11.6C13.5 14.8 2.5 14.8 2.5 11.6Z" fill="#d6a472" stroke="#9a6436" stroke-width="1"/><ellipse cx="8" cy="4.5" rx="4.6" ry="2.2" fill="#f2d4ae" stroke="#a87040" stroke-width="0.8"/><path d="M5.3 6.5V13.4M8 6.8V14.2M10.7 6.5V13.4" stroke="#a06a3a" stroke-width="0.9"/><path d="M8 2.4V6.8" stroke="#b07a48" stroke-width="0.8"/></svg>
<svg style="left:27px;top:489px" width="9" height="9" viewBox="0 0 9 9"><defs><linearGradient id="eg22" x1="0" y1="0" x2="0" y2="1"><stop offset="0" stop-color="#fff"/><stop offset="1" stop-color="#d8d4c8"/></linearGradient></defs><rect x="0.5" y="0.5" width="8" height="8" rx="1" fill="url(#eg22)" stroke="#8a8a8a"/><path d="M2 4.5H7" stroke="#000"/><path d="M4.5 2V7" stroke="#000"/></svg>
<div class="t" style="left:66px;top:487.69px;font-size:11px;line-height:11px;color:#000;letter-spacing:-0.2px;">Data Types Model</div>
<svg style="left:47px;top:502px" width="17" height="17" viewBox="0 0 17 17"><path d="M2.5 4.6C2.5 1.4 13.5 1.4 13.5 4.6V11.6C13.5 14.8 2.5 14.8 2.5 11.6Z" fill="#d6a472" stroke="#9a6436" stroke-width="1"/><ellipse cx="8" cy="4.5" rx="4.6" ry="2.2" fill="#f2d4ae" stroke="#a87040" stroke-width="0.8"/><path d="M5.3 6.5V13.4M8 6.8V14.2M10.7 6.5V13.4" stroke="#a06a3a" stroke-width="0.9"/><path d="M8 2.4V6.8" stroke="#b07a48" stroke-width="0.8"/></svg>
<svg style="left:27px;top:506px" width="9" height="9" viewBox="0 0 9 9"><defs><linearGradient id="eg23" x1="0" y1="0" x2="0" y2="1"><stop offset="0" stop-color="#fff"/><stop offset="1" stop-color="#d8d4c8"/></linearGradient></defs><rect x="0.5" y="0.5" width="8" height="8" rx="1" fill="url(#eg23)" stroke="#8a8a8a"/><path d="M2 4.5H7" stroke="#000"/><path d="M4.5 2V7" stroke="#000"/></svg>
<div class="t" style="left:66px;top:504.69px;font-size:11px;line-height:11px;color:#000;letter-spacing:-0.2px;">Process Model</div>
<svg style="left:47px;top:519px" width="17" height="17" viewBox="0 0 17 17"><path d="M2.5 4.6C2.5 1.4 13.5 1.4 13.5 4.6V11.6C13.5 14.8 2.5 14.8 2.5 11.6Z" fill="#d6a472" stroke="#9a6436" stroke-width="1"/><ellipse cx="8" cy="4.5" rx="4.6" ry="2.2" fill="#f2d4ae" stroke="#a87040" stroke-width="0.8"/><path d="M5.3 6.5V13.4M8 6.8V14.2M10.7 6.5V13.4" stroke="#a06a3a" stroke-width="0.9"/><path d="M8 2.4V6.8" stroke="#b07a48" stroke-width="0.8"/></svg>
<svg style="left:27px;top:523px" width="9" height="9" viewBox="0 0 9 9"><defs><linearGradient id="eg24" x1="0" y1="0" x2="0" y2="1"><stop offset="0" stop-color="#fff"/><stop offset="1" stop-color="#d8d4c8"/></linearGradient></defs><rect x="0.5" y="0.5" width="8" height="8" rx="1" fill="url(#eg24)" stroke="#8a8a8a"/><path d="M2 4.5H7" stroke="#000"/><path d="M4.5 2V7" stroke="#000"/></svg>
<div class="t" style="left:66px;top:521.69px;font-size:11px;line-height:11px;color:#000;letter-spacing:-0.2px;">Business Information</div>
<svg style="left:47px;top:536px" width="17" height="17" viewBox="0 0 17 17"><rect x="0.5" y="0.5" width="14" height="14" fill="#f4f6ff" stroke="#5a5a9a"/><path d="M4 3.5H12M4 6H12M4 8.5H12M4 11H12" stroke="#333" stroke-width="0.9"/><path d="M4 6H12M4 11H10" stroke="#2a7ae0" stroke-width="0.9"/><path d="M4 8.5H12" stroke="#e04040" stroke-width="0.9"/><path d="M2.2 3.5H3M2.2 6H3M2.2 8.5H3M2.2 11H3" stroke="#e04040" stroke-width="0.9"/></svg>
<div class="t" style="left:66px;top:538.69px;font-size:11px;line-height:11px;color:#000;letter-spacing:-0.2px;">Change Requests []</div>
<svg style="left:47px;top:553px" width="17" height="17" viewBox="0 0 17 17"><rect x="0.5" y="0.5" width="12" height="13" fill="#eef0ff" stroke="#5a5a9a"/><path d="M3 3.5H10M3 6H10M3 8.5H10" stroke="#6a6ab0" stroke-width="0.9"/><circle cx="4.5" cy="12.5" r="2.6" fill="#f8d020" stroke="#a07000" stroke-width="0.9"/><path d="M6.8 11.4H15.5V13.4H14V14.4H12.5V13.4H6.8Z" fill="#f8d020" stroke="#a07000" stroke-width="0.7"/></svg>
<div class="t" style="left:66px;top:555.69px;font-size:11px;line-height:11px;color:#000;letter-spacing:-0.2px;">Sensitive Types []</div>
<svg style="left:47px;top:570px" width="17" height="17" viewBox="0 0 17 17"><rect x="0.5" y="0.5" width="11" height="13" fill="#f4f6ff" stroke="#5a5a8a"/><path d="M3 3.5H9M3 6H9" stroke="#5a5aa0"/><path d="M6.5 7.5H15.5V12C15.5 14 13 15.5 11 16C9 15.5 6.5 14 6.5 12Z" fill="#f8c820" stroke="#a07000"/></svg>
<div class="t" style="left:66px;top:572.69px;font-size:11px;line-height:11px;color:#000;letter-spacing:-0.2px;">TSDP Policies []</div>
<div style="position:absolute;left:329px;top:88px;width:94px;height:22px;background:#9bb6d3;border:1px solid #b0c5dd;border-bottom:none;border-radius:3px 3px 0 0;box-sizing:border-box"></div>
<div style="position:absolute;left:425px;top:88px;width:164px;height:22px;background:linear-gradient(to bottom,#fff 0,#fff 14px,#ebebeb 14px);border-radius:3px 3px 0 0;"></div>
<div style="position:absolute;left:425px;top:88px;width:164px;height:3px;background:#f9c86c;border-radius:3px 3px 0 0"></div>
<div class="t" style="left:351px;top:94.69px;font-size:11px;line-height:11px;color:#000;letter-spacing:0px;">Start Page</div>
<div class="t" style="left:448px;top:94.86px;font-size:10.8px;line-height:10.8px;color:#000;letter-spacing:0px;">Relational_1 (Untitled_1)</div>
<svg style="left:411px;top:96px" width="7" height="6"><path d="M0.5 0.5L6 5.5M6 0.5L0.5 5.5" stroke="#c8d6e6" stroke-width="1.2"/></svg>
<svg style="left:577px;top:96px" width="7" height="6"><path d="M0.5 0.5L6 5.5M6 0.5L0.5 5.5" stroke="#b0b0b0" stroke-width="1.2"/></svg>
<svg style="left:332px;top:91px" width="16" height="16" viewBox="0 0 16 16">
<defs><radialGradient id="hg" cx="0.4" cy="0.35" r="0.7"><stop offset="0" stop-color="#e6f4ff"/><stop offset="0.6" stop-color="#8cc8f8"/><stop offset="1" stop-color="#3d8de0"/></radialGradient></defs>
<circle cx="7.5" cy="7.5" r="7" fill="url(#hg)" stroke="#1550b0" stroke-width="1"/>
<path d="M5.2 5.6C5.2 3.2 10.2 3.2 10.2 5.6C10.2 7.2 7.8 7.3 7.8 9" fill="none" stroke="#0b2a8a" stroke-width="1.8"/>
<rect x="6.8" y="10.3" width="2" height="2" fill="#0b2a8a"/></svg>
<svg style="left:429px;top:91px" width="16" height="16" viewBox="0 0 16 16"><rect x="0.6" y="0.6" width="13" height="13" fill="#fff" stroke="#333" stroke-width="1.2"/><rect x="2.3" y="2.3" width="4.2" height="4.2" fill="#c8f8c0" stroke="#009000" stroke-width="1.4"/><rect x="8.4" y="2.3" width="3.4" height="2.6" fill="#c8f8c0" stroke="#009000" stroke-width="1.4"/><rect x="2.3" y="8.3" width="3.8" height="3.2" fill="#c8f8c0" stroke="#009000" stroke-width="1.4"/><path d="M6.5 3.6H8.4M4.2 6.5V8.3" stroke="#009000" stroke-width="1.2"/><path d="M7.2 7.6V14C7.2 15.6 14.8 15.6 14.8 14V7.6Z" fill="#6a6ab0"/><ellipse cx="11" cy="7.6" rx="3.8" ry="1.3" fill="#8a8ac8" stroke="#3a3a70" stroke-width="0.8"/><path d="M8.5 9.8H13.5M8.5 11.8H13.5M8.5 13.8H13.5" stroke="#e8e8ff" stroke-width="0.9"/><path d="M7.2 7.6V14C7.2 15.6 14.8 15.6 14.8 14V7.6" fill="none" stroke="#3a3a70" stroke-width="0.8"/></svg>
<svg style="left:1544px;top:90px" width="16" height="18" viewBox="0 0 16 18">
<defs><linearGradient id="ddg" x1="0" y1="0" x2="0" y2="1"><stop offset="0" stop-color="#aebdd6"/><stop offset="0.45" stop-color="#a2b2cc"/><stop offset="0.5" stop-color="#94a8c4"/><stop offset="1" stop-color="#9aaeca"/></linearGradient></defs>
<path d="M1 2.5Q1 1 2.5 1H13.5Q15 1 15 2.5V14.5Q15 16.5 13 16.5H3Q1 16.5 1 14.5Z" fill="url(#ddg)" stroke="#8a9ebc" stroke-width="0.8"/>
<path d="M2.5 16.3H13.5" stroke="#45557c" stroke-width="1.3"/>
<path d="M4 7H12L8 11.2Z" fill="#d2e6f6"/></svg>
<div style="position:absolute;left:328px;top:110px;width:1232px;height:1002px;background:#fff"></div>
<div style="position:absolute;left:331px;top:112px;width:1225px;height:996px;border:1px solid #7a7a7a;box-sizing:border-box;background:#fff"></div>
<div style="position:absolute;left:1557px;top:110px;width:2px;height:1002px;background:#8f8f80"></div>
<div style="position:absolute;left:1542px;top:113px;width:13px;height:994px;background:linear-gradient(to right,#e6e6e6 0,#f4f4f4 1px,#f4f4f4 6px,#eaeaea 6px,#eaeaea 100%)"></div>
<svg style="left:1544px;top:116px" width="10" height="5"><path d="M1 4.5H9L5 0.5Z" fill="#a8a8a8"/></svg>
<svg style="left:1544px;top:1096px" width="10" height="5"><path d="M1 0.5H9L5 4.5Z" fill="#a8a8a8"/></svg>
<div style="position:absolute;left:1544px;top:125px;width:10px;height:607px;background:linear-gradient(to right,#d3e0ee 0,#c6d6ea 50%,#bfd1e7 100%);border-radius:5px"></div>
<svg style="left:0;top:0" width="1560" height="1112" font-family="Liberation Sans" shape-rendering="auto"><defs><clipPath id="cv"><rect x="332" y="113" width="1210" height="994"/></clipPath></defs><g clip-path="url(#cv)"><path d="M692.50 200.70L705.50 194.50L692.50 188.30" fill="none" stroke="#000"/><path d="M705.50 200.70L705.50 188.30" stroke="#000"/><path d="M692.50 194.50L765.50 194.50" stroke="#000" fill="none"/><path d="M773.00 194.50L765.00 199.00L765.00 190.00Z" fill="#000"/><path d="M483.30 358.50L489.50 371.50L495.70 358.50" fill="none" stroke="#000"/><path d="M483.30 371.50L495.70 371.50" stroke="#000"/><path d="M489.50 358.50L489.50 411.50" stroke="#000" fill="none" stroke-dasharray="8 8" stroke-dashoffset="3.5"/><path d="M489.50 419.00L485.00 411.00L494.00 411.00Z" fill="#000"/><path d="M619.02 362.68L632.37 368.10L628.18 354.32" fill="none" stroke="#000"/><path d="M627.79 372.28L636.94 363.92" stroke="#000"/><path d="M623.60 358.50L702.44 444.86" stroke="#000" fill="none"/><path d="M707.50 450.40L698.78 447.53L705.43 441.46Z" fill="#000"/><path d="M876.70 419.50L870.50 406.50L864.30 419.50" fill="none" stroke="#000"/><path d="M876.70 406.50L864.30 406.50" stroke="#000"/><path d="M870.50 419.50L870.50 262.00" stroke="#000" fill="none"/><path d="M870.50 254.50L875.00 262.50L866.00 262.50Z" fill="#000"/><path d="M625.50 510.70L638.50 504.50L625.50 498.30" fill="none" stroke="#000"/><path d="M638.50 510.70L638.50 498.30" stroke="#000"/><path d="M625.50 504.50L699.50 504.50" stroke="#000" fill="none" stroke-dasharray="8 8" stroke-dashoffset="14"/><path d="M707.00 504.50L699.00 509.00L699.00 500.00Z" fill="#000"/><path d="M707.50 508.30L694.50 514.50L707.50 520.70" fill="none" stroke="#000"/><path d="M694.50 508.30L694.50 520.70" stroke="#000"/><path d="M707.50 514.50L633.50 514.50" stroke="#000" fill="none" stroke-dasharray="8 8" stroke-dashoffset="15"/><path d="M626.00 514.50L634.00 510.00L634.00 519.00Z" fill="#000"/><path d="M483.30 588.50L489.50 601.50L495.70 588.50" fill="none" stroke="#000"/><path d="M483.30 601.50L495.70 601.50" stroke="#000"/><path d="M489.50 588.50L489.50 641.50" stroke="#000" fill="none" stroke-dasharray="8 8" stroke-dashoffset="3"/><path d="M489.50 649.00L485.00 641.00L494.00 641.00Z" fill="#000"/><path d="M472.30 860.50L478.50 873.50L484.70 860.50" fill="none" stroke="#000"/><path d="M472.30 873.50L484.70 873.50" stroke="#000"/><path d="M478.50 860.50L478.50 913.50" stroke="#000" fill="none" stroke-dasharray="8 8" stroke-dashoffset="3"/><path d="M478.50 921.00L474.00 913.00L483.00 913.00Z" fill="#000"/><path d="M467.30 1028.50L473.50 1041.50L479.70 1028.50" fill="none" stroke="#000"/><path d="M467.30 1041.50L479.70 1041.50" stroke="#000"/><path d="M473.50 1028.50L473.50 1081.50" stroke="#000" fill="none" stroke-dasharray="8 8" stroke-dashoffset="3"/><path d="M473.50 1089.00L469.00 1081.00L478.00 1081.00Z" fill="#000"/><path d="M831.3 770.5L837.5 783L843.7 770.5M831.3 783.5H843.7" fill="none" stroke="#000"/><path d="M837.5 770.5V796.5" fill="none" stroke="#000" stroke-dasharray="8 8" stroke-dashoffset="8.5"/><path d="M837 796.5H993.5" fill="none" stroke="#000" stroke-dasharray="8 8" stroke-dashoffset="1"/><path d="M993.5 595V796.5" fill="none" stroke="#000" stroke-dasharray="8 8" stroke-dashoffset="0"/><path d="M976 595.5H993.5" fill="none" stroke="#000" stroke-dasharray="9 8" stroke-dashoffset="0"/><path d="M968.00 595.50L976.00 591.00L976.00 600.00Z" fill="#000"/><rect x="352.5" y="133.5" width="340" height="225" fill="#ffffb4" stroke="#0000ff"/><path d="M352 151.5H693" stroke="#0000ff"/><path d="M352 227.5H693" stroke="#0000ff"/><path d="M352 247.5H693" stroke="#0000ff"/><path d="M352 295.5H693" stroke="#0000ff"/><text x="522.5" y="147" text-anchor="middle" fill="#0000ff" stroke="#0000ff" stroke-width="0.15" font-size="10" letter-spacing="0.25">HR.JOB_HISTORY</text><text x="354.5" y="165" fill="#0000ff" stroke="#0000ff" stroke-width="0.15" font-size="10" letter-spacing="0.3">PF</text><path d="M369.5 157.8V161.2M367.5 158.7L371.5 160.3M371.5 158.7L367.5 160.3" stroke="#ff0000" stroke-width="0.9"/><text x="378" y="165" fill="#000" stroke="#000" stroke-width="0.1" font-size="10" letter-spacing="0.3">EMPLOYEE_ID</text><text x="486.5" y="165" fill="#118811" stroke="#118811" stroke-width="0.08" font-size="10" letter-spacing="0.25">NUMBER (6)</text><text x="354.5" y="179" fill="#0000ff" stroke="#0000ff" stroke-width="0.15" font-size="10">P</text><path d="M369.5 171.8V175.2M367.5 172.7L371.5 174.3M371.5 172.7L367.5 174.3" stroke="#ff0000" stroke-width="0.9"/><text x="378" y="179" fill="#000" stroke="#000" stroke-width="0.1" font-size="10" letter-spacing="0.3">START_DATE</text><text x="486.5" y="179" fill="#118811" stroke="#118811" stroke-width="0.08" font-size="10" letter-spacing="0.25">DATE</text><path d="M369.5 185.8V189.2M367.5 186.7L371.5 188.3M371.5 186.7L367.5 188.3" stroke="#ff0000" stroke-width="0.9"/><text x="378" y="193" fill="#000" stroke="#000" stroke-width="0.1" font-size="10" letter-spacing="0.3">END_DATE</text><text x="486.5" y="193" fill="#118811" stroke="#118811" stroke-width="0.08" font-size="10" letter-spacing="0.25">DATE</text><text x="354.5" y="207" fill="#000" stroke="#000" stroke-width="0.15" font-size="10">F</text><path d="M369.5 199.8V203.2M367.5 200.7L371.5 202.3M371.5 200.7L367.5 202.3" stroke="#ff0000" stroke-width="0.9"/><text x="378" y="207" fill="#000" stroke="#000" stroke-width="0.1" font-size="10" letter-spacing="0.3">JOB_ID</text><text x="486.5" y="207" fill="#118811" stroke="#118811" stroke-width="0.08" font-size="10" letter-spacing="0.25">VARCHAR2 (10 BYTE)</text><text x="354.5" y="221" fill="#000" stroke="#000" stroke-width="0.15" font-size="10">F</text><text x="378" y="221" fill="#000" stroke="#000" stroke-width="0.1" font-size="10" letter-spacing="0.3">DEPARTMENT_ID</text><text x="486.5" y="221" fill="#118811" stroke="#118811" stroke-width="0.08" font-size="10" letter-spacing="0.25">NUMBER (4)</text><g transform="translate(354,233.5)"><path d="M5 2.2H12.3L13.5 4L12.3 5.8H11V5H10V5.8H9V5H8V5.8H5Z" fill="#dcdac4" stroke="#4a4a44" stroke-width="1"/><ellipse cx="3.5" cy="4" rx="3" ry="3.3" fill="#eceac8" stroke="#4a4a44" stroke-width="1"/><ellipse cx="3" cy="4.8" rx="1.2" ry="1.4" fill="#c8c070"/><path d="M1 8H13" stroke="#c8c8b8" stroke-width="1"/></g><text x="371" y="241" fill="#000" stroke="#000" stroke-width="0.1" font-size="10" letter-spacing="0.3">JHIST_EMP_ID_ST_DATE_PK (EMPLOYEE_ID, START_DATE)</text><g transform="translate(354,251.5)"><rect x="0.6" y="0.6" width="6" height="6.2" rx="2" fill="#f6c818" stroke="#b07800" stroke-width="1"/><rect x="2.4" y="2.6" width="1.8" height="2" fill="#7a6a40"/><path d="M6.5 2.3H13V4.6H6.5Z" fill="#f6d030" stroke="#b07800" stroke-width="0.7"/><path d="M3.2 13.6C3.4 11.6 5.2 11.3 7.6 11.2V9.4H5.6L9.4 5.8L13.2 9.4H11.2V11.4C11.2 13.2 9.4 13.8 7.5 13.8Z" fill="#2db02d" stroke="#0a5a0a" stroke-width="0.8"/><path d="M8.5 7.5L9.5 6.8" stroke="#b8f0b8" stroke-width="0.9"/></g><text x="371" y="261" fill="#000" stroke="#000" stroke-width="0.1" font-size="10" letter-spacing="0.3">JHIST_DEPT_FK (DEPARTMENT_ID)</text><g transform="translate(354,265.5)"><rect x="0.6" y="0.6" width="6" height="6.2" rx="2" fill="#f6c818" stroke="#b07800" stroke-width="1"/><rect x="2.4" y="2.6" width="1.8" height="2" fill="#7a6a40"/><path d="M6.5 2.3H13V4.6H6.5Z" fill="#f6d030" stroke="#b07800" stroke-width="0.7"/><path d="M3.2 13.6C3.4 11.6 5.2 11.3 7.6 11.2V9.4H5.6L9.4 5.8L13.2 9.4H11.2V11.4C11.2 13.2 9.4 13.8 7.5 13.8Z" fill="#2db02d" stroke="#0a5a0a" stroke-width="0.8"/><path d="M8.5 7.5L9.5 6.8" stroke="#b8f0b8" stroke-width="0.9"/></g><text x="371" y="275" fill="#000" stroke="#000" stroke-width="0.1" font-size="10" letter-spacing="0.3">JHIST_EMP_FK (EMPLOYEE_ID)</text><g transform="translate(354,279.5)"><rect x="0.6" y="0.6" width="6" height="6.2" rx="2" fill="#f6c818" stroke="#b07800" stroke-width="1"/><rect x="2.4" y="2.6" width="1.8" height="2" fill="#7a6a40"/><path d="M6.5 2.3H13V4.6H6.5Z" fill="#f6d030" stroke="#b07800" stroke-width="0.7"/><path d="M3.2 13.6C3.4 11.6 5.2 11.3 7.6 11.2V9.4H5.6L9.4 5.8L13.2 9.4H11.2V11.4C11.2 13.2 9.4 13.8 7.5 13.8Z" fill="#2db02d" stroke="#0a5a0a" stroke-width="0.8"/><path d="M8.5 7.5L9.5 6.8" stroke="#b8f0b8" stroke-width="0.9"/></g><text x="371" y="289" fill="#000" stroke="#000" stroke-width="0.1" font-size="10" letter-spacing="0.3">JHIST_JOB_FK (JOB_ID)</text><path d="M360.5 301L365.0 306L360.5 311L356.0 306Z" fill="#6aaee0" stroke="#4a7aa0" stroke-width="0.9"/><path d="M360.5 302L363.7 305.5L357.3 305.5Z" fill="#d8f0ff"/><text x="371" y="309" fill="#000" stroke="#000" stroke-width="0.1" font-size="10" letter-spacing="0.3">JHIST_DEPARTMENT_IX (DEPARTMENT_ID)</text><path d="M360.5 315L365.0 320L360.5 325L356.0 320Z" fill="#6aaee0" stroke="#4a7aa0" stroke-width="0.9"/><path d="M360.5 316L363.7 319.5L357.3 319.5Z" fill="#d8f0ff"/><text x="371" y="323" fill="#000" stroke="#000" stroke-width="0.1" font-size="10" letter-spacing="0.3">JHIST_EMP_ID_ST_DATE_PK (EMPLOYEE_ID, START_DATE)</text><path d="M360.5 329L365.0 334L360.5 339L356.0 334Z" fill="#6aaee0" stroke="#4a7aa0" stroke-width="0.9"/><path d="M360.5 330L363.7 333.5L357.3 333.5Z" fill="#d8f0ff"/><text x="371" y="337" fill="#000" stroke="#000" stroke-width="0.1" font-size="10" letter-spacing="0.3">JHIST_EMPLOYEE_IX (EMPLOYEE_ID)</text><path d="M360.5 343L365.0 348L360.5 353L356.0 348Z" fill="#6aaee0" stroke="#4a7aa0" stroke-width="0.9"/><path d="M360.5 344L363.7 347.5L357.3 347.5Z" fill="#d8f0ff"/><text x="371" y="351" fill="#000" stroke="#000" stroke-width="0.1" font-size="10" letter-spacing="0.3">JHIST_JOB_IX (JOB_ID)</text><rect x="773.5" y="133.5" width="231" height="121" fill="#ffffb4" stroke="#0000ff"/><path d="M773 151.5H1005" stroke="#0000ff"/><path d="M773 213.5H1005" stroke="#0000ff"/><path d="M773 233.5H1005" stroke="#0000ff"/><text x="889.0" y="147" text-anchor="middle" fill="#0000ff" stroke="#0000ff" stroke-width="0.15" font-size="10" letter-spacing="0.25">HR.JOBS</text><text x="775.5" y="165" fill="#0000ff" stroke="#0000ff" stroke-width="0.15" font-size="10">P</text><path d="M790.5 157.8V161.2M788.5 158.7L792.5 160.3M792.5 158.7L788.5 160.3" stroke="#ff0000" stroke-width="0.9"/><text x="799" y="165" fill="#000" stroke="#000" stroke-width="0.1" font-size="10" letter-spacing="0.3">JOB_ID</text><text x="885.3" y="165" fill="#118811" stroke="#118811" stroke-width="0.08" font-size="10" letter-spacing="0.25">VARCHAR2 (10 BYTE)</text><path d="M790.5 171.8V175.2M788.5 172.7L792.5 174.3M792.5 172.7L788.5 174.3" stroke="#ff0000" stroke-width="0.9"/><text x="799" y="179" fill="#000" stroke="#000" stroke-width="0.1" font-size="10" letter-spacing="0.3">JOB_TITLE</text><text x="885.3" y="179" fill="#118811" stroke="#118811" stroke-width="0.08" font-size="10" letter-spacing="0.25">VARCHAR2 (35 BYTE)</text><text x="799" y="193" fill="#000" stroke="#000" stroke-width="0.1" font-size="10" letter-spacing="0.3">MIN_SALARY</text><text x="885.3" y="193" fill="#118811" stroke="#118811" stroke-width="0.08" font-size="10" letter-spacing="0.25">NUMBER (6)</text><text x="799" y="207" fill="#000" stroke="#000" stroke-width="0.1" font-size="10" letter-spacing="0.3">MAX_SALARY</text><text x="885.3" y="207" fill="#118811" stroke="#118811" stroke-width="0.08" font-size="10" letter-spacing="0.25">NUMBER (6)</text><g transform="translate(775,219.5)"><path d="M5 2.2H12.3L13.5 4L12.3 5.8H11V5H10V5.8H9V5H8V5.8H5Z" fill="#dcdac4" stroke="#4a4a44" stroke-width="1"/><ellipse cx="3.5" cy="4" rx="3" ry="3.3" fill="#eceac8" stroke="#4a4a44" stroke-width="1"/><ellipse cx="3" cy="4.8" rx="1.2" ry="1.4" fill="#c8c070"/><path d="M1 8H13" stroke="#c8c8b8" stroke-width="1"/></g><text x="792" y="227" fill="#000" stroke="#000" stroke-width="0.1" font-size="10" letter-spacing="0.3">JOB_ID_PK (JOB_ID)</text><path d="M781.5 239L786.0 244L781.5 249L777.0 244Z" fill="#6aaee0" stroke="#4a7aa0" stroke-width="0.9"/><path d="M781.5 240L784.7 243.5L778.3 243.5Z" fill="#d8f0ff"/><text x="792" y="247" fill="#000" stroke="#000" stroke-width="0.1" font-size="10" letter-spacing="0.3">JOB_ID_PK (JOB_ID)</text><rect x="352.5" y="419.5" width="273" height="169" fill="#ffffb4" stroke="#0000ff"/><path d="M352 437.5H626" stroke="#0000ff"/><path d="M352 499.5H626" stroke="#0000ff"/><path d="M352 519.5H626" stroke="#0000ff"/><path d="M352 553.5H626" stroke="#0000ff"/><text x="489.0" y="433" text-anchor="middle" fill="#0000ff" stroke="#0000ff" stroke-width="0.15" font-size="10" letter-spacing="0.25">HR.DEPARTMENTS</text><text x="354.5" y="451" fill="#0000ff" stroke="#0000ff" stroke-width="0.15" font-size="10">P</text><path d="M369.5 443.8V447.2M367.5 444.7L371.5 446.3M371.5 444.7L367.5 446.3" stroke="#ff0000" stroke-width="0.9"/><text x="378" y="451" fill="#000" stroke="#000" stroke-width="0.1" font-size="10" letter-spacing="0.3">DEPARTMENT_ID</text><text x="506.4" y="451" fill="#118811" stroke="#118811" stroke-width="0.08" font-size="10" letter-spacing="0.25">NUMBER (4)</text><path d="M369.5 457.8V461.2M367.5 458.7L371.5 460.3M371.5 458.7L367.5 460.3" stroke="#ff0000" stroke-width="0.9"/><text x="378" y="465" fill="#000" stroke="#000" stroke-width="0.1" font-size="10" letter-spacing="0.3">DEPARTMENT_NAME</text><text x="506.4" y="465" fill="#118811" stroke="#118811" stroke-width="0.08" font-size="10" letter-spacing="0.25">VARCHAR2 (30 BYTE)</text><text x="354.5" y="479" fill="#000" stroke="#000" stroke-width="0.15" font-size="10">F</text><text x="378" y="479" fill="#000" stroke="#000" stroke-width="0.1" font-size="10" letter-spacing="0.3">MANAGER_ID</text><text x="506.4" y="479" fill="#118811" stroke="#118811" stroke-width="0.08" font-size="10" letter-spacing="0.25">NUMBER (6)</text><text x="354.5" y="493" fill="#000" stroke="#000" stroke-width="0.15" font-size="10">F</text><text x="378" y="493" fill="#000" stroke="#000" stroke-width="0.1" font-size="10" letter-spacing="0.3">LOCATION_ID</text><text x="506.4" y="493" fill="#118811" stroke="#118811" stroke-width="0.08" font-size="10" letter-spacing="0.25">NUMBER (4)</text><g transform="translate(354,505.5)"><path d="M5 2.2H12.3L13.5 4L12.3 5.8H11V5H10V5.8H9V5H8V5.8H5Z" fill="#dcdac4" stroke="#4a4a44" stroke-width="1"/><ellipse cx="3.5" cy="4" rx="3" ry="3.3" fill="#eceac8" stroke="#4a4a44" stroke-width="1"/><ellipse cx="3" cy="4.8" rx="1.2" ry="1.4" fill="#c8c070"/><path d="M1 8H13" stroke="#c8c8b8" stroke-width="1"/></g><text x="371" y="513" fill="#000" stroke="#000" stroke-width="0.1" font-size="10" letter-spacing="0.3">DEPT_ID_PK (DEPARTMENT_ID)</text><g transform="translate(354,523.5)"><rect x="0.6" y="0.6" width="6" height="6.2" rx="2" fill="#f6c818" stroke="#b07800" stroke-width="1"/><rect x="2.4" y="2.6" width="1.8" height="2" fill="#7a6a40"/><path d="M6.5 2.3H13V4.6H6.5Z" fill="#f6d030" stroke="#b07800" stroke-width="0.7"/><path d="M3.2 13.6C3.4 11.6 5.2 11.3 7.6 11.2V9.4H5.6L9.4 5.8L13.2 9.4H11.2V11.4C11.2 13.2 9.4 13.8 7.5 13.8Z" fill="#2db02d" stroke="#0a5a0a" stroke-width="0.8"/><path d="M8.5 7.5L9.5 6.8" stroke="#b8f0b8" stroke-width="0.9"/></g><text x="371" y="533" fill="#000" stroke="#000" stroke-width="0.1" font-size="10" letter-spacing="0.3">DEPT_LOC_FK (LOCATION_ID)</text><g transform="translate(354,537.5)"><rect x="0.6" y="0.6" width="6" height="6.2" rx="2" fill="#f6c818" stroke="#b07800" stroke-width="1"/><rect x="2.4" y="2.6" width="1.8" height="2" fill="#7a6a40"/><path d="M6.5 2.3H13V4.6H6.5Z" fill="#f6d030" stroke="#b07800" stroke-width="0.7"/><path d="M3.2 13.6C3.4 11.6 5.2 11.3 7.6 11.2V9.4H5.6L9.4 5.8L13.2 9.4H11.2V11.4C11.2 13.2 9.4 13.8 7.5 13.8Z" fill="#2db02d" stroke="#0a5a0a" stroke-width="0.8"/><path d="M8.5 7.5L9.5 6.8" stroke="#b8f0b8" stroke-width="0.9"/></g><text x="371" y="547" fill="#000" stroke="#000" stroke-width="0.1" font-size="10" letter-spacing="0.3">DEPT_MGR_FK (MANAGER_ID)</text><path d="M360.5 559L365.0 564L360.5 569L356.0 564Z" fill="#6aaee0" stroke="#4a7aa0" stroke-width="0.9"/><path d="M360.5 560L363.7 563.5L357.3 563.5Z" fill="#d8f0ff"/><text x="371" y="567" fill="#000" stroke="#000" stroke-width="0.1" font-size="10" letter-spacing="0.3">DEPT_ID_PK (DEPARTMENT_ID)</text><path d="M360.5 573L365.0 578L360.5 583L356.0 578Z" fill="#6aaee0" stroke="#4a7aa0" stroke-width="0.9"/><path d="M360.5 574L363.7 577.5L357.3 577.5Z" fill="#d8f0ff"/><text x="371" y="581" fill="#000" stroke="#000" stroke-width="0.1" font-size="10" letter-spacing="0.3">DEPT_LOCATION_IX (LOCATION_ID)</text><rect x="707.5" y="419.5" width="260" height="351" fill="#ffffb4" stroke="#0000ff"/><path d="M707 437.5H968" stroke="#0000ff"/><path d="M707 597.5H968" stroke="#0000ff"/><path d="M707 631.5H968" stroke="#0000ff"/><path d="M707 679.5H968" stroke="#0000ff"/><text x="837.5" y="433" text-anchor="middle" fill="#0000ff" stroke="#0000ff" stroke-width="0.15" font-size="10" letter-spacing="0.25">HR.EMPLOYEES</text><text x="709.5" y="451" fill="#0000ff" stroke="#0000ff" stroke-width="0.15" font-size="10">P</text><path d="M724.5 443.8V447.2M722.5 444.7L726.5 446.3M726.5 444.7L722.5 446.3" stroke="#ff0000" stroke-width="0.9"/><text x="733" y="451" fill="#000" stroke="#000" stroke-width="0.1" font-size="10" letter-spacing="0.3">EMPLOYEE_ID</text><text x="848.6" y="451" fill="#118811" stroke="#118811" stroke-width="0.08" font-size="10" letter-spacing="0.25">NUMBER (6)</text><text x="733" y="465" fill="#000" stroke="#000" stroke-width="0.1" font-size="10" letter-spacing="0.3">FIRST_NAME</text><text x="848.6" y="465" fill="#118811" stroke="#118811" stroke-width="0.08" font-size="10" letter-spacing="0.25">VARCHAR2 (20 BYTE)</text><path d="M724.5 471.8V475.2M722.5 472.7L726.5 474.3M726.5 472.7L722.5 474.3" stroke="#ff0000" stroke-width="0.9"/><text x="733" y="479" fill="#000" stroke="#000" stroke-width="0.1" font-size="10" letter-spacing="0.3">LAST_NAME</text><text x="848.6" y="479" fill="#118811" stroke="#118811" stroke-width="0.08" font-size="10" letter-spacing="0.25">VARCHAR2 (25 BYTE)</text><text x="709.5" y="493" fill="#0000ff" stroke="#0000ff" stroke-width="0.15" font-size="10">U</text><path d="M724.5 485.8V489.2M722.5 486.7L726.5 488.3M726.5 486.7L722.5 488.3" stroke="#ff0000" stroke-width="0.9"/><text x="733" y="493" fill="#000" stroke="#000" stroke-width="0.1" font-size="10" letter-spacing="0.3">EMAIL</text><text x="848.6" y="493" fill="#118811" stroke="#118811" stroke-width="0.08" font-size="10" letter-spacing="0.25">VARCHAR2 (25 BYTE)</text><text x="733" y="507" fill="#000" stroke="#000" stroke-width="0.1" font-size="10" letter-spacing="0.3">PHONE_NUMBER</text><text x="848.6" y="507" fill="#118811" stroke="#118811" stroke-width="0.08" font-size="10" letter-spacing="0.25">VARCHAR2 (20 BYTE)</text><path d="M724.5 513.8V517.2M722.5 514.7L726.5 516.3M726.5 514.7L722.5 516.3" stroke="#ff0000" stroke-width="0.9"/><text x="733" y="521" fill="#000" stroke="#000" stroke-width="0.1" font-size="10" letter-spacing="0.3">HIRE_DATE</text><text x="848.6" y="521" fill="#118811" stroke="#118811" stroke-width="0.08" font-size="10" letter-spacing="0.25">DATE</text><text x="709.5" y="535" fill="#000" stroke="#000" stroke-width="0.15" font-size="10">F</text><path d="M724.5 527.8V531.2M722.5 528.7L726.5 530.3M726.5 528.7L722.5 530.3" stroke="#ff0000" stroke-width="0.9"/><text x="733" y="535" fill="#000" stroke="#000" stroke-width="0.1" font-size="10" letter-spacing="0.3">JOB_ID</text><text x="848.6" y="535" fill="#118811" stroke="#118811" stroke-width="0.08" font-size="10" letter-spacing="0.25">VARCHAR2 (10 BYTE)</text><text x="733" y="549" fill="#000" stroke="#000" stroke-width="0.1" font-size="10" letter-spacing="0.3">SALARY</text><text x="848.6" y="549" fill="#118811" stroke="#118811" stroke-width="0.08" font-size="10" letter-spacing="0.25">NUMBER (8,2)</text><text x="733" y="563" fill="#000" stroke="#000" stroke-width="0.1" font-size="10" letter-spacing="0.3">COMMISSION_PCT</text><text x="848.6" y="563" fill="#118811" stroke="#118811" stroke-width="0.08" font-size="10" letter-spacing="0.25">NUMBER (2,2)</text><text x="709.5" y="577" fill="#000" stroke="#000" stroke-width="0.15" font-size="10">F</text><text x="733" y="577" fill="#000" stroke="#000" stroke-width="0.1" font-size="10" letter-spacing="0.3">MANAGER_ID</text><text x="848.6" y="577" fill="#118811" stroke="#118811" stroke-width="0.08" font-size="10" letter-spacing="0.25">NUMBER (6)</text><text x="709.5" y="591" fill="#000" stroke="#000" stroke-width="0.15" font-size="10">F</text><text x="733" y="591" fill="#000" stroke="#000" stroke-width="0.1" font-size="10" letter-spacing="0.3">DEPARTMENT_ID</text><text x="848.6" y="591" fill="#118811" stroke="#118811" stroke-width="0.08" font-size="10" letter-spacing="0.25">NUMBER (4)</text><path d="M715.5 603L720.0 608L715.5 613L711.0 608Z" fill="#6aaee0" stroke="#4a7aa0" stroke-width="0.9"/><path d="M715.5 604L718.7 607.5L712.3 607.5Z" fill="#d8f0ff"/><text x="726" y="611" fill="#000" stroke="#000" stroke-width="0.1" font-size="10" letter-spacing="0.3">EMP_EMAIL_UK (EMAIL)</text><g transform="translate(709,617.5)"><path d="M5 2.2H12.3L13.5 4L12.3 5.8H11V5H10V5.8H9V5H8V5.8H5Z" fill="#dcdac4" stroke="#4a4a44" stroke-width="1"/><ellipse cx="3.5" cy="4" rx="3" ry="3.3" fill="#eceac8" stroke="#4a4a44" stroke-width="1"/><ellipse cx="3" cy="4.8" rx="1.2" ry="1.4" fill="#c8c070"/><path d="M1 8H13" stroke="#c8c8b8" stroke-width="1"/></g><text x="726" y="625" fill="#000" stroke="#000" stroke-width="0.1" font-size="10" letter-spacing="0.3">EMP_EMP_ID_PK (EMPLOYEE_ID)</text><g transform="translate(709,635.5)"><rect x="0.6" y="0.6" width="6" height="6.2" rx="2" fill="#f6c818" stroke="#b07800" stroke-width="1"/><rect x="2.4" y="2.6" width="1.8" height="2" fill="#7a6a40"/><path d="M6.5 2.3H13V4.6H6.5Z" fill="#f6d030" stroke="#b07800" stroke-width="0.7"/><path d="M3.2 13.6C3.4 11.6 5.2 11.3 7.6 11.2V9.4H5.6L9.4 5.8L13.2 9.4H11.2V11.4C11.2 13.2 9.4 13.8 7.5 13.8Z" fill="#2db02d" stroke="#0a5a0a" stroke-width="0.8"/><path d="M8.5 7.5L9.5 6.8" stroke="#b8f0b8" stroke-width="0.9"/></g><text x="726" y="645" fill="#000" stroke="#000" stroke-width="0.1" font-size="10" letter-spacing="0.3">EMP_DEPT_FK (DEPARTMENT_ID)</text><g transform="translate(709,649.5)"><rect x="0.6" y="0.6" width="6" height="6.2" rx="2" fill="#f6c818" stroke="#b07800" stroke-width="1"/><rect x="2.4" y="2.6" width="1.8" height="2" fill="#7a6a40"/><path d="M6.5 2.3H13V4.6H6.5Z" fill="#f6d030" stroke="#b07800" stroke-width="0.7"/><path d="M3.2 13.6C3.4 11.6 5.2 11.3 7.6 11.2V9.4H5.6L9.4 5.8L13.2 9.4H11.2V11.4C11.2 13.2 9.4 13.8 7.5 13.8Z" fill="#2db02d" stroke="#0a5a0a" stroke-width="0.8"/><path d="M8.5 7.5L9.5 6.8" stroke="#b8f0b8" stroke-width="0.9"/></g><text x="726" y="659" fill="#000" stroke="#000" stroke-width="0.1" font-size="10" letter-spacing="0.3">EMP_JOB_FK (JOB_ID)</text><g transform="translate(709,663.5)"><rect x="0.6" y="0.6" width="6" height="6.2" rx="2" fill="#f6c818" stroke="#b07800" stroke-width="1"/><rect x="2.4" y="2.6" width="1.8" height="2" fill="#7a6a40"/><path d="M6.5 2.3H13V4.6H6.5Z" fill="#f6d030" stroke="#b07800" stroke-width="0.7"/><path d="M3.2 13.6C3.4 11.6 5.2 11.3 7.6 11.2V9.4H5.6L9.4 5.8L13.2 9.4H11.2V11.4C11.2 13.2 9.4 13.8 7.5 13.8Z" fill="#2db02d" stroke="#0a5a0a" stroke-width="0.8"/><path d="M8.5 7.5L9.5 6.8" stroke="#b8f0b8" stroke-width="0.9"/></g><text x="726" y="673" fill="#000" stroke="#000" stroke-width="0.1" font-size="10" letter-spacing="0.3">EMP_MANAGER_FK (MANAGER_ID)</text><path d="M715.5 685L720.0 690L715.5 695L711.0 690Z" fill="#6aaee0" stroke="#4a7aa0" stroke-width="0.9"/><path d="M715.5 686L718.7 689.5L712.3 689.5Z" fill="#d8f0ff"/><text x="726" y="693" fill="#000" stroke="#000" stroke-width="0.1" font-size="10" letter-spacing="0.3">EMP_DEPARTMENT_IX (DEPARTMENT_ID)</text><path d="M715.5 699L720.0 704L715.5 709L711.0 704Z" fill="#6aaee0" stroke="#4a7aa0" stroke-width="0.9"/><path d="M715.5 700L718.7 703.5L712.3 703.5Z" fill="#d8f0ff"/><text x="726" y="707" fill="#000" stroke="#000" stroke-width="0.1" font-size="10" letter-spacing="0.3">EMP_EMAIL_UK (EMAIL)</text><path d="M715.5 713L720.0 718L715.5 723L711.0 718Z" fill="#6aaee0" stroke="#4a7aa0" stroke-width="0.9"/><path d="M715.5 714L718.7 717.5L712.3 717.5Z" fill="#d8f0ff"/><text x="726" y="721" fill="#000" stroke="#000" stroke-width="0.1" font-size="10" letter-spacing="0.3">EMP_EMP_ID_PK (EMPLOYEE_ID)</text><path d="M715.5 727L720.0 732L715.5 737L711.0 732Z" fill="#6aaee0" stroke="#4a7aa0" stroke-width="0.9"/><path d="M715.5 728L718.7 731.5L712.3 731.5Z" fill="#d8f0ff"/><text x="726" y="735" fill="#000" stroke="#000" stroke-width="0.1" font-size="10" letter-spacing="0.3">EMP_JOB_IX (JOB_ID)</text><path d="M715.5 741L720.0 746L715.5 751L711.0 746Z" fill="#6aaee0" stroke="#4a7aa0" stroke-width="0.9"/><path d="M715.5 742L718.7 745.5L712.3 745.5Z" fill="#d8f0ff"/><text x="726" y="749" fill="#000" stroke="#000" stroke-width="0.1" font-size="10" letter-spacing="0.3">EMP_MANAGER_IX (MANAGER_ID)</text><path d="M715.5 755L720.0 760L715.5 765L711.0 760Z" fill="#6aaee0" stroke="#4a7aa0" stroke-width="0.9"/><path d="M715.5 756L718.7 759.5L712.3 759.5Z" fill="#d8f0ff"/><text x="726" y="763" fill="#000" stroke="#000" stroke-width="0.1" font-size="10" letter-spacing="0.3">EMP_NAME_IX (LAST_NAME, FIRST_NAME)</text><rect x="352.5" y="649.5" width="274" height="211" fill="#ffffb4" stroke="#0000ff"/><path d="M352 667.5H627" stroke="#0000ff"/><path d="M352 757.5H627" stroke="#0000ff"/><path d="M352 777.5H627" stroke="#0000ff"/><path d="M352 797.5H627" stroke="#0000ff"/><text x="489.5" y="663" text-anchor="middle" fill="#0000ff" stroke="#0000ff" stroke-width="0.15" font-size="10" letter-spacing="0.25">HR.LOCATIONS</text><text x="354.5" y="681" fill="#0000ff" stroke="#0000ff" stroke-width="0.15" font-size="10">P</text><path d="M369.5 673.8V677.2M367.5 674.7L371.5 676.3M371.5 674.7L367.5 676.3" stroke="#ff0000" stroke-width="0.9"/><text x="378" y="681" fill="#000" stroke="#000" stroke-width="0.1" font-size="10" letter-spacing="0.3">LOCATION_ID</text><text x="495.4" y="681" fill="#118811" stroke="#118811" stroke-width="0.08" font-size="10" letter-spacing="0.25">NUMBER (4)</text><text x="378" y="695" fill="#000" stroke="#000" stroke-width="0.1" font-size="10" letter-spacing="0.3">STREET_ADDRESS</text><text x="495.4" y="695" fill="#118811" stroke="#118811" stroke-width="0.08" font-size="10" letter-spacing="0.25">VARCHAR2 (40 BYTE)</text><text x="378" y="709" fill="#000" stroke="#000" stroke-width="0.1" font-size="10" letter-spacing="0.3">POSTAL_CODE</text><text x="495.4" y="709" fill="#118811" stroke="#118811" stroke-width="0.08" font-size="10" letter-spacing="0.25">VARCHAR2 (12 BYTE)</text><path d="M369.5 715.8V719.2M367.5 716.7L371.5 718.3M371.5 716.7L367.5 718.3" stroke="#ff0000" stroke-width="0.9"/><text x="378" y="723" fill="#000" stroke="#000" stroke-width="0.1" font-size="10" letter-spacing="0.3">CITY</text><text x="495.4" y="723" fill="#118811" stroke="#118811" stroke-width="0.08" font-size="10" letter-spacing="0.25">VARCHAR2 (30 BYTE)</text><text x="378" y="737" fill="#000" stroke="#000" stroke-width="0.1" font-size="10" letter-spacing="0.3">STATE_PROVINCE</text><text x="495.4" y="737" fill="#118811" stroke="#118811" stroke-width="0.08" font-size="10" letter-spacing="0.25">VARCHAR2 (25 BYTE)</text><text x="354.5" y="751" fill="#000" stroke="#000" stroke-width="0.15" font-size="10">F</text><text x="378" y="751" fill="#000" stroke="#000" stroke-width="0.1" font-size="10" letter-spacing="0.3">COUNTRY_ID</text><text x="495.4" y="751" fill="#118811" stroke="#118811" stroke-width="0.08" font-size="10" letter-spacing="0.25">CHAR (2 BYTE)</text><g transform="translate(354,763.5)"><path d="M5 2.2H12.3L13.5 4L12.3 5.8H11V5H10V5.8H9V5H8V5.8H5Z" fill="#dcdac4" stroke="#4a4a44" stroke-width="1"/><ellipse cx="3.5" cy="4" rx="3" ry="3.3" fill="#eceac8" stroke="#4a4a44" stroke-width="1"/><ellipse cx="3" cy="4.8" rx="1.2" ry="1.4" fill="#c8c070"/><path d="M1 8H13" stroke="#c8c8b8" stroke-width="1"/></g><text x="371" y="771" fill="#000" stroke="#000" stroke-width="0.1" font-size="10" letter-spacing="0.3">LOC_ID_PK (LOCATION_ID)</text><g transform="translate(354,781.5)"><rect x="0.6" y="0.6" width="6" height="6.2" rx="2" fill="#f6c818" stroke="#b07800" stroke-width="1"/><rect x="2.4" y="2.6" width="1.8" height="2" fill="#7a6a40"/><path d="M6.5 2.3H13V4.6H6.5Z" fill="#f6d030" stroke="#b07800" stroke-width="0.7"/><path d="M3.2 13.6C3.4 11.6 5.2 11.3 7.6 11.2V9.4H5.6L9.4 5.8L13.2 9.4H11.2V11.4C11.2 13.2 9.4 13.8 7.5 13.8Z" fill="#2db02d" stroke="#0a5a0a" stroke-width="0.8"/><path d="M8.5 7.5L9.5 6.8" stroke="#b8f0b8" stroke-width="0.9"/></g><text x="371" y="791" fill="#000" stroke="#000" stroke-width="0.1" font-size="10" letter-spacing="0.3">LOC_C_ID_FK (COUNTRY_ID)</text><path d="M360.5 803L365.0 808L360.5 813L356.0 808Z" fill="#6aaee0" stroke="#4a7aa0" stroke-width="0.9"/><path d="M360.5 804L363.7 807.5L357.3 807.5Z" fill="#d8f0ff"/><text x="371" y="811" fill="#000" stroke="#000" stroke-width="0.1" font-size="10" letter-spacing="0.3">LOC_CITY_IX (CITY)</text><path d="M360.5 817L365.0 822L360.5 827L356.0 822Z" fill="#6aaee0" stroke="#4a7aa0" stroke-width="0.9"/><path d="M360.5 818L363.7 821.5L357.3 821.5Z" fill="#d8f0ff"/><text x="371" y="825" fill="#000" stroke="#000" stroke-width="0.1" font-size="10" letter-spacing="0.3">LOC_COUNTRY_IX (COUNTRY_ID)</text><path d="M360.5 831L365.0 836L360.5 841L356.0 836Z" fill="#6aaee0" stroke="#4a7aa0" stroke-width="0.9"/><path d="M360.5 832L363.7 835.5L357.3 835.5Z" fill="#d8f0ff"/><text x="371" y="839" fill="#000" stroke="#000" stroke-width="0.1" font-size="10" letter-spacing="0.3">LOC_ID_PK (LOCATION_ID)</text><path d="M360.5 845L365.0 850L360.5 855L356.0 850Z" fill="#6aaee0" stroke="#4a7aa0" stroke-width="0.9"/><path d="M360.5 846L363.7 849.5L357.3 849.5Z" fill="#d8f0ff"/><text x="371" y="853" fill="#000" stroke="#000" stroke-width="0.1" font-size="10" letter-spacing="0.3">LOC_STATE_PROVINCE_IX (STATE_PROVINCE)</text><rect x="352.5" y="921.5" width="251" height="107" fill="#ffffb4" stroke="#0000ff"/><path d="M352 939.5H604" stroke="#0000ff"/><path d="M352 987.5H604" stroke="#0000ff"/><path d="M352 1007.5H604" stroke="#0000ff"/><text x="478.0" y="935" text-anchor="middle" fill="#0000ff" stroke="#0000ff" stroke-width="0.15" font-size="10" letter-spacing="0.25">HR.COUNTRIES</text><text x="354.5" y="953" fill="#0000ff" stroke="#0000ff" stroke-width="0.15" font-size="10">P</text><path d="M369.5 945.8V949.2M367.5 946.7L371.5 948.3M371.5 946.7L367.5 948.3" stroke="#ff0000" stroke-width="0.9"/><text x="378" y="953" fill="#000" stroke="#000" stroke-width="0.1" font-size="10" letter-spacing="0.3">COUNTRY_ID</text><text x="484.4" y="953" fill="#118811" stroke="#118811" stroke-width="0.08" font-size="10" letter-spacing="0.25">CHAR (2 BYTE)</text><text x="378" y="967" fill="#000" stroke="#000" stroke-width="0.1" font-size="10" letter-spacing="0.3">COUNTRY_NAME</text><text x="484.4" y="967" fill="#118811" stroke="#118811" stroke-width="0.08" font-size="10" letter-spacing="0.25">VARCHAR2 (40 BYTE)</text><text x="354.5" y="981" fill="#000" stroke="#000" stroke-width="0.15" font-size="10">F</text><text x="378" y="981" fill="#000" stroke="#000" stroke-width="0.1" font-size="10" letter-spacing="0.3">REGION_ID</text><text x="484.4" y="981" fill="#118811" stroke="#118811" stroke-width="0.08" font-size="10" letter-spacing="0.25">NUMBER</text><g transform="translate(354,993.5)"><path d="M5 2.2H12.3L13.5 4L12.3 5.8H11V5H10V5.8H9V5H8V5.8H5Z" fill="#dcdac4" stroke="#4a4a44" stroke-width="1"/><ellipse cx="3.5" cy="4" rx="3" ry="3.3" fill="#eceac8" stroke="#4a4a44" stroke-width="1"/><ellipse cx="3" cy="4.8" rx="1.2" ry="1.4" fill="#c8c070"/><path d="M1 8H13" stroke="#c8c8b8" stroke-width="1"/></g><text x="371" y="1001" fill="#000" stroke="#000" stroke-width="0.1" font-size="10" letter-spacing="0.3">COUNTRY_C_ID_PK (COUNTRY_ID)</text><g transform="translate(354,1011.5)"><rect x="0.6" y="0.6" width="6" height="6.2" rx="2" fill="#f6c818" stroke="#b07800" stroke-width="1"/><rect x="2.4" y="2.6" width="1.8" height="2" fill="#7a6a40"/><path d="M6.5 2.3H13V4.6H6.5Z" fill="#f6d030" stroke="#b07800" stroke-width="0.7"/><path d="M3.2 13.6C3.4 11.6 5.2 11.3 7.6 11.2V9.4H5.6L9.4 5.8L13.2 9.4H11.2V11.4C11.2 13.2 9.4 13.8 7.5 13.8Z" fill="#2db02d" stroke="#0a5a0a" stroke-width="0.8"/><path d="M8.5 7.5L9.5 6.8" stroke="#b8f0b8" stroke-width="0.9"/></g><text x="371" y="1021" fill="#000" stroke="#000" stroke-width="0.1" font-size="10" letter-spacing="0.3">COUNTR_REG_FK (REGION_ID)</text><rect x="352.5" y="1089.5" width="241" height="39" fill="#ffffb4" stroke="#0000ff"/><path d="M352 1107.5H594" stroke="#0000ff"/><text x="473.0" y="1103" text-anchor="middle" fill="#0000ff" stroke="#0000ff" stroke-width="0.15" font-size="10" letter-spacing="0.25">HR.REGIONS</text><text x="354.5" y="1121" fill="#0000ff" stroke="#0000ff" stroke-width="0.15" font-size="10">P</text><path d="M369.5 1113.8V1117.2M367.5 1114.7L371.5 1116.3M371.5 1114.7L367.5 1116.3" stroke="#ff0000" stroke-width="0.9"/><text x="378" y="1121" fill="#000" stroke="#000" stroke-width="0.1" font-size="10" letter-spacing="0.3">REGION_ID</text><text x="470" y="1121" fill="#118811" stroke="#118811" stroke-width="0.08" font-size="10" letter-spacing="0.25">NUMBER</text></g></svg>
<div style="position:absolute;left:333px;top:1110px;width:77px;height:2px;background:linear-gradient(to right,#1e5fd0,#dbe6f5)"></div>
<div style="position:absolute;left:410px;top:1109px;width:1145px;height:2px;background:#9a9a8a"></div>
</body></html>
